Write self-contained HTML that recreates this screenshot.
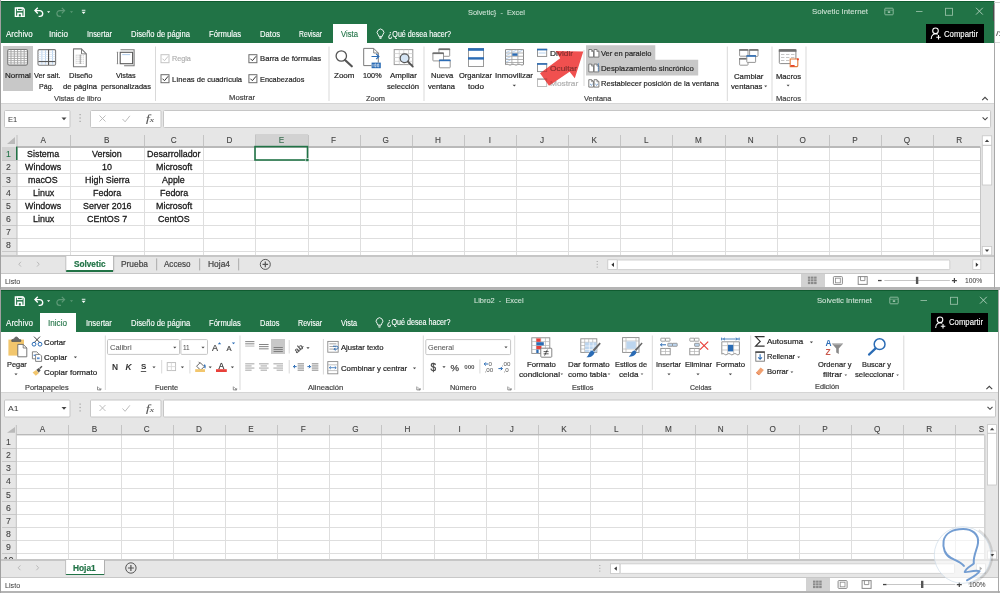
<!DOCTYPE html>
<html><head><meta charset="utf-8"><style>
html,body{margin:0;padding:0;width:1000px;height:593px;overflow:hidden;background:#fff;font-family:"Liberation Sans", sans-serif;}
#root{position:relative;width:1000px;height:593px;overflow:hidden;}
</style></head><body><div id="root">
<div style="position:absolute;left:0px;top:0px;width:1000px;height:593px;background:#ffffff;"></div><div style="position:absolute;left:1px;top:1px;width:993px;height:42px;background:#217346;"></div><div style="position:absolute;left:333px;top:24px;width:34px;height:19px;background:#ffffff;"></div><div style="position:absolute;left:926px;top:24px;width:58px;height:19px;background:#000000;"></div><div style="position:absolute;left:1px;top:43px;width:993px;height:60px;background:#ffffff;"></div><div style="position:absolute;left:1px;top:104px;width:993px;height:43px;background:#e6e6e6;"></div><div style="position:absolute;left:0px;top:287px;width:1000px;height:3px;background:#b4b4b4;"></div><div style="position:absolute;left:1px;top:290px;width:998px;height:42px;background:#217346;"></div><div style="position:absolute;left:39.6px;top:313px;width:36.6px;height:19px;background:#ffffff;"></div><div style="position:absolute;left:931px;top:313px;width:57px;height:19px;background:#000000;"></div><div style="position:absolute;left:1px;top:332px;width:998px;height:60px;background:#ffffff;"></div><div style="position:absolute;left:1px;top:393px;width:998px;height:43px;background:#e6e6e6;"></div><div style="position:absolute;left:255px;top:134px;width:53px;height:11.6px;background:#d2d2d2;"></div><div style="position:absolute;left:17px;top:146.6px;width:963px;height:108.4px;background:#ffffff;"></div><div style="position:absolute;left:1px;top:146.6px;width:16px;height:108.4px;background:#e6e6e6;"></div><div style="position:absolute;left:2px;top:147.2px;width:14.6px;height:12.9px;background:#d2d2d2;"></div><div style="position:absolute;left:1px;top:255px;width:993px;height:1.6px;background:#c6c6c6;"></div><div style="position:absolute;left:1px;top:256.5px;width:993px;height:16.3px;background:#e6e6e6;"></div><div style="position:absolute;left:1px;top:272.8px;width:993px;height:1.5px;background:#c8c8c8;"></div><div style="position:absolute;left:1px;top:274.3px;width:993px;height:12.7px;background:#ffffff;"></div><div style="position:absolute;left:65.8px;top:256px;width:47.4px;height:15px;background:#ffffff;"></div><div style="position:absolute;left:65.8px;top:270.2px;width:47.4px;height:1.6px;background:#217346;"></div><div style="position:absolute;left:16.3px;top:435.3px;width:968.1px;height:123.90000000000003px;background:#ffffff;"></div><div style="position:absolute;left:1px;top:435.3px;width:15.3px;height:123.90000000000003px;background:#e6e6e6;"></div><div style="position:absolute;left:1px;top:559.2px;width:997px;height:1.6px;background:#c6c6c6;"></div><div style="position:absolute;left:1px;top:560.8px;width:997px;height:16px;background:#e6e6e6;"></div><div style="position:absolute;left:1px;top:576.8px;width:997px;height:1.5px;background:#c8c8c8;"></div><div style="position:absolute;left:1px;top:578.3px;width:997px;height:12.7px;background:#ffffff;"></div><div style="position:absolute;left:1px;top:591px;width:999px;height:2px;background:#b4b4b4;"></div><div style="position:absolute;left:65.6px;top:560px;width:38.4px;height:15px;background:#ffffff;"></div><div style="position:absolute;left:65.6px;top:573.6px;width:38.4px;height:1.6px;background:#217346;"></div><div style="position:absolute;left:3.2px;top:45.5px;width:29.6px;height:45.4px;background:#c8c8c8;"></div><div style="position:absolute;left:980px;top:134px;width:14px;height:121px;background:#e6e6e6;"></div><div style="position:absolute;left:800.5px;top:273.6px;width:24.899999999999977px;height:13.6px;background:#d2d2d2;"></div><div style="position:absolute;left:271px;top:339.3px;width:14.3px;height:14.7px;background:#c8c8c8;"></div><div style="position:absolute;left:984.4px;top:424px;width:14px;height:135.2px;background:#e6e6e6;"></div><div style="position:absolute;left:805.6px;top:577.6px;width:24.0px;height:13.6px;background:#d2d2d2;"></div>
<svg width="1000" height="593" viewBox="0 0 1000 593" style="position:absolute;left:0;top:0">
<rect x="1" y="1" width="993" height="1" fill="#0f5c30"/><rect x="1" y="103" width="993" height="1" fill="#d5d5d5"/><rect x="0" y="0" width="1" height="289" fill="#a0a0a0"/><rect x="994" y="1" width="1" height="288" fill="#a8a8a8"/><rect x="994" y="2" width="6" height="1" fill="#d0d0d0"/><rect x="1" y="290" width="998" height="1" fill="#0f5c30"/><rect x="1" y="392" width="998" height="1" fill="#d5d5d5"/><rect x="0" y="290" width="1" height="303" fill="#a0a0a0"/><rect x="998" y="290" width="1" height="303" fill="#a8a8a8"/><rect x="17" y="160" width="963" height="1" fill="#dedede"/><rect x="2" y="160" width="15" height="1" fill="#c8c8c8"/><rect x="17" y="173" width="963" height="1" fill="#dedede"/><rect x="2" y="173" width="15" height="1" fill="#c8c8c8"/><rect x="17" y="186" width="963" height="1" fill="#dedede"/><rect x="2" y="186" width="15" height="1" fill="#c8c8c8"/><rect x="17" y="199" width="963" height="1" fill="#dedede"/><rect x="2" y="199" width="15" height="1" fill="#c8c8c8"/><rect x="17" y="212" width="963" height="1" fill="#dedede"/><rect x="2" y="212" width="15" height="1" fill="#c8c8c8"/><rect x="17" y="225" width="963" height="1" fill="#dedede"/><rect x="2" y="225" width="15" height="1" fill="#c8c8c8"/><rect x="17" y="238" width="963" height="1" fill="#dedede"/><rect x="2" y="238" width="15" height="1" fill="#c8c8c8"/><rect x="17" y="251" width="963" height="1" fill="#dedede"/><rect x="2" y="251" width="15" height="1" fill="#c8c8c8"/><rect x="70" y="146.6" width="1" height="108.4" fill="#dedede"/><rect x="70" y="135" width="1" height="11.599999999999994" fill="#c4c4c4"/><rect x="144" y="146.6" width="1" height="108.4" fill="#dedede"/><rect x="144" y="135" width="1" height="11.599999999999994" fill="#c4c4c4"/><rect x="203" y="146.6" width="1" height="108.4" fill="#dedede"/><rect x="203" y="135" width="1" height="11.599999999999994" fill="#c4c4c4"/><rect x="255" y="146.6" width="1" height="108.4" fill="#dedede"/><rect x="255" y="135" width="1" height="11.599999999999994" fill="#c4c4c4"/><rect x="308" y="146.6" width="1" height="108.4" fill="#dedede"/><rect x="308" y="135" width="1" height="11.599999999999994" fill="#c4c4c4"/><rect x="360" y="146.6" width="1" height="108.4" fill="#dedede"/><rect x="360" y="135" width="1" height="11.599999999999994" fill="#c4c4c4"/><rect x="412" y="146.6" width="1" height="108.4" fill="#dedede"/><rect x="412" y="135" width="1" height="11.599999999999994" fill="#c4c4c4"/><rect x="464" y="146.6" width="1" height="108.4" fill="#dedede"/><rect x="464" y="135" width="1" height="11.599999999999994" fill="#c4c4c4"/><rect x="516" y="146.6" width="1" height="108.4" fill="#dedede"/><rect x="516" y="135" width="1" height="11.599999999999994" fill="#c4c4c4"/><rect x="568" y="146.6" width="1" height="108.4" fill="#dedede"/><rect x="568" y="135" width="1" height="11.599999999999994" fill="#c4c4c4"/><rect x="620" y="146.6" width="1" height="108.4" fill="#dedede"/><rect x="620" y="135" width="1" height="11.599999999999994" fill="#c4c4c4"/><rect x="672" y="146.6" width="1" height="108.4" fill="#dedede"/><rect x="672" y="135" width="1" height="11.599999999999994" fill="#c4c4c4"/><rect x="725" y="146.6" width="1" height="108.4" fill="#dedede"/><rect x="725" y="135" width="1" height="11.599999999999994" fill="#c4c4c4"/><rect x="777" y="146.6" width="1" height="108.4" fill="#dedede"/><rect x="777" y="135" width="1" height="11.599999999999994" fill="#c4c4c4"/><rect x="829" y="146.6" width="1" height="108.4" fill="#dedede"/><rect x="829" y="135" width="1" height="11.599999999999994" fill="#c4c4c4"/><rect x="881" y="146.6" width="1" height="108.4" fill="#dedede"/><rect x="881" y="135" width="1" height="11.599999999999994" fill="#c4c4c4"/><rect x="933" y="146.6" width="1" height="108.4" fill="#dedede"/><rect x="933" y="135" width="1" height="11.599999999999994" fill="#c4c4c4"/><rect x="17" y="146" width="963" height="2" fill="#b9b9b9"/><rect x="16.5" y="135" width="1" height="120" fill="#c0c0c0"/><polygon points="7,144.1 15,144.1 15,137" fill="#b9b9b9"/><rect x="255" y="146.6" width="52.5" height="13.4" fill="none" stroke="#217346" stroke-width="1.6"/><rect x="305.8" y="158.3" width="3.2" height="3.2" fill="#217346" stroke="#fff" stroke-width="0.6"/><rect x="16" y="146.6" width="1.5" height="13.400000000000006" fill="#217346"/><rect x="65.3" y="256" width="1" height="15.5" fill="#c0c0c0"/><rect x="113.2" y="256" width="1" height="15.5" fill="#b0b0b0"/><rect x="156" y="258.4" width="1.2" height="12.0" fill="#b4b4b4"/><rect x="199" y="258.4" width="1.2" height="12.0" fill="#b4b4b4"/><rect x="238" y="258.4" width="1.2" height="12.0" fill="#b4b4b4"/><rect x="16.3" y="448" width="968.1" height="1" fill="#dedede"/><rect x="2" y="448" width="14.3" height="1" fill="#c8c8c8"/><rect x="16.3" y="461" width="968.1" height="1" fill="#dedede"/><rect x="2" y="461" width="14.3" height="1" fill="#c8c8c8"/><rect x="16.3" y="474" width="968.1" height="1" fill="#dedede"/><rect x="2" y="474" width="14.3" height="1" fill="#c8c8c8"/><rect x="16.3" y="488" width="968.1" height="1" fill="#dedede"/><rect x="2" y="488" width="14.3" height="1" fill="#c8c8c8"/><rect x="16.3" y="501" width="968.1" height="1" fill="#dedede"/><rect x="2" y="501" width="14.3" height="1" fill="#c8c8c8"/><rect x="16.3" y="514" width="968.1" height="1" fill="#dedede"/><rect x="2" y="514" width="14.3" height="1" fill="#c8c8c8"/><rect x="16.3" y="527" width="968.1" height="1" fill="#dedede"/><rect x="2" y="527" width="14.3" height="1" fill="#c8c8c8"/><rect x="16.3" y="540" width="968.1" height="1" fill="#dedede"/><rect x="2" y="540" width="14.3" height="1" fill="#c8c8c8"/><rect x="16.3" y="553" width="968.1" height="1" fill="#dedede"/><rect x="2" y="553" width="14.3" height="1" fill="#c8c8c8"/><rect x="68" y="435.3" width="1" height="123.90000000000003" fill="#dedede"/><rect x="68" y="425" width="1" height="10.300000000000011" fill="#c4c4c4"/><rect x="121" y="435.3" width="1" height="123.90000000000003" fill="#dedede"/><rect x="121" y="425" width="1" height="10.300000000000011" fill="#c4c4c4"/><rect x="173" y="435.3" width="1" height="123.90000000000003" fill="#dedede"/><rect x="173" y="425" width="1" height="10.300000000000011" fill="#c4c4c4"/><rect x="225" y="435.3" width="1" height="123.90000000000003" fill="#dedede"/><rect x="225" y="425" width="1" height="10.300000000000011" fill="#c4c4c4"/><rect x="277" y="435.3" width="1" height="123.90000000000003" fill="#dedede"/><rect x="277" y="425" width="1" height="10.300000000000011" fill="#c4c4c4"/><rect x="329" y="435.3" width="1" height="123.90000000000003" fill="#dedede"/><rect x="329" y="425" width="1" height="10.300000000000011" fill="#c4c4c4"/><rect x="381" y="435.3" width="1" height="123.90000000000003" fill="#dedede"/><rect x="381" y="425" width="1" height="10.300000000000011" fill="#c4c4c4"/><rect x="434" y="435.3" width="1" height="123.90000000000003" fill="#dedede"/><rect x="434" y="425" width="1" height="10.300000000000011" fill="#c4c4c4"/><rect x="486" y="435.3" width="1" height="123.90000000000003" fill="#dedede"/><rect x="486" y="425" width="1" height="10.300000000000011" fill="#c4c4c4"/><rect x="538" y="435.3" width="1" height="123.90000000000003" fill="#dedede"/><rect x="538" y="425" width="1" height="10.300000000000011" fill="#c4c4c4"/><rect x="590" y="435.3" width="1" height="123.90000000000003" fill="#dedede"/><rect x="590" y="425" width="1" height="10.300000000000011" fill="#c4c4c4"/><rect x="642" y="435.3" width="1" height="123.90000000000003" fill="#dedede"/><rect x="642" y="425" width="1" height="10.300000000000011" fill="#c4c4c4"/><rect x="695" y="435.3" width="1" height="123.90000000000003" fill="#dedede"/><rect x="695" y="425" width="1" height="10.300000000000011" fill="#c4c4c4"/><rect x="747" y="435.3" width="1" height="123.90000000000003" fill="#dedede"/><rect x="747" y="425" width="1" height="10.300000000000011" fill="#c4c4c4"/><rect x="799" y="435.3" width="1" height="123.90000000000003" fill="#dedede"/><rect x="799" y="425" width="1" height="10.300000000000011" fill="#c4c4c4"/><rect x="851" y="435.3" width="1" height="123.90000000000003" fill="#dedede"/><rect x="851" y="425" width="1" height="10.300000000000011" fill="#c4c4c4"/><rect x="903" y="435.3" width="1" height="123.90000000000003" fill="#dedede"/><rect x="903" y="425" width="1" height="10.300000000000011" fill="#c4c4c4"/><rect x="955" y="435.3" width="1" height="123.90000000000003" fill="#dedede"/><rect x="955" y="425" width="1" height="10.300000000000011" fill="#c4c4c4"/><rect x="16.3" y="434" width="968.1" height="1.4" fill="#b9b9b9"/><rect x="15.8" y="425" width="1" height="134.20000000000005" fill="#c0c0c0"/><polygon points="7,432.8 15,432.8 15,427" fill="#b9b9b9"/><rect x="65.1" y="560" width="1" height="15" fill="#c0c0c0"/><rect x="104" y="560" width="1" height="15" fill="#b0b0b0"/><rect x="4.5" y="110.5" width="65.5" height="17" fill="#fff" stroke="#c6c6c6" stroke-width="1" rx="1"/><path d="M61.5 117.5 h5 l-2.5 2.8z" fill="#444"/><rect x="79.5" y="114.0" width="1.2" height="1.2" fill="#a0a0a0" /><rect x="79.5" y="117.4" width="1.2" height="1.2" fill="#a0a0a0" /><rect x="79.5" y="120.8" width="1.2" height="1.2" fill="#a0a0a0" /><rect x="90.5" y="110.5" width="70.5" height="17" fill="#fff" stroke="#c6c6c6" stroke-width="1" rx="1"/><path d="M99.5 115.5 l6 6 M105.5 115.5 l-6 6" stroke="#b4b4b4" stroke-width="0.9" fill="none"/><path d="M122.5 119 l2.6 2.8 l4.8 -6" stroke="#b4b4b4" stroke-width="0.9" fill="none"/><rect x="163.5" y="110.5" width="827.1" height="17" fill="#fff" stroke="#c6c6c6" stroke-width="1" rx="1"/><path d="M982.6 117.3 l2.5 2.5 l2.5 -2.5" stroke="#444" stroke-width="1.1" fill="none"/><rect x="4.5" y="400.0" width="65.5" height="17" fill="#fff" stroke="#c6c6c6" stroke-width="1" rx="1"/><path d="M61.5 407.0 h5 l-2.5 2.8z" fill="#444"/><rect x="79.5" y="403.5" width="1.2" height="1.2" fill="#a0a0a0" /><rect x="79.5" y="406.9" width="1.2" height="1.2" fill="#a0a0a0" /><rect x="79.5" y="410.3" width="1.2" height="1.2" fill="#a0a0a0" /><rect x="90.5" y="400.0" width="70.5" height="17" fill="#fff" stroke="#c6c6c6" stroke-width="1" rx="1"/><path d="M99.5 405.0 l6 6 M105.5 405.0 l-6 6" stroke="#b4b4b4" stroke-width="0.9" fill="none"/><path d="M122.5 408.5 l2.6 2.8 l4.8 -6" stroke="#b4b4b4" stroke-width="0.9" fill="none"/><rect x="163.5" y="400.0" width="832.0" height="17" fill="#fff" stroke="#c6c6c6" stroke-width="1" rx="1"/><path d="M987.5 406.8 l2.5 2.5 l2.5 -2.5" stroke="#444" stroke-width="1.1" fill="none"/><g transform="translate(0,0)"><path d="M15.4 8 h7.6 l1.2 1.2 v7.2 h-8.8z" fill="none" stroke="#ffffff" stroke-width="1.4"/><rect x="17.4" y="8" width="4.8" height="2.6" fill="none" stroke="#ffffff" stroke-width="1"/><rect x="17.2" y="12.6" width="5.2" height="3.8" fill="#ffffff"/><rect x="18.8" y="14.2" width="2" height="2.2" fill="#217346"/></g><g transform="translate(0,0)"><path d="M35.2 10.6 h4.6 a2.9 2.9 0 0 1 0 5.8 h-1.2" fill="none" stroke="#ffffff" stroke-width="1.4"/><path d="M37.8 7.8 l-2.8 2.8 l2.8 2.8" fill="none" stroke="#ffffff" stroke-width="1.4"/><path d="M47 11.2 h3.2 l-1.6 1.8z" fill="#ffffff"/><path d="M64.4 10.6 h-4.6 a2.9 2.9 0 0 0 0 5.8 h1.2" fill="none" stroke="#5e9a77" stroke-width="1.2"/><path d="M61.8 7.8 l2.8 2.8 l-2.8 2.8" fill="none" stroke="#5e9a77" stroke-width="1.2"/><path d="M70 11.2 h3 l-1.5 1.7z" fill="#5e9a77"/><rect x="81.8" y="9.8" width="3.6" height="0.9" fill="#ffffff"/><path d="M81.6 11.8 h4 l-2 2.2z" fill="#ffffff"/></g><g transform="translate(0,289)"><path d="M15.4 8 h7.6 l1.2 1.2 v7.2 h-8.8z" fill="none" stroke="#ffffff" stroke-width="1.4"/><rect x="17.4" y="8" width="4.8" height="2.6" fill="none" stroke="#ffffff" stroke-width="1"/><rect x="17.2" y="12.6" width="5.2" height="3.8" fill="#ffffff"/><rect x="18.8" y="14.2" width="2" height="2.2" fill="#217346"/></g><g transform="translate(0,289)"><path d="M35.2 10.6 h4.6 a2.9 2.9 0 0 1 0 5.8 h-1.2" fill="none" stroke="#ffffff" stroke-width="1.4"/><path d="M37.8 7.8 l-2.8 2.8 l2.8 2.8" fill="none" stroke="#ffffff" stroke-width="1.4"/><path d="M47 11.2 h3.2 l-1.6 1.8z" fill="#ffffff"/><path d="M64.4 10.6 h-4.6 a2.9 2.9 0 0 0 0 5.8 h1.2" fill="none" stroke="#5e9a77" stroke-width="1.2"/><path d="M61.8 7.8 l2.8 2.8 l-2.8 2.8" fill="none" stroke="#5e9a77" stroke-width="1.2"/><path d="M70 11.2 h3 l-1.5 1.7z" fill="#5e9a77"/><rect x="81.8" y="9.8" width="3.6" height="0.9" fill="#ffffff"/><path d="M81.6 11.8 h4 l-2 2.2z" fill="#ffffff"/></g><g transform="translate(0,0)"><rect x="884.8" y="8.2" width="8.4" height="6.6" rx="0.8" fill="none" stroke="#93bea4" stroke-width="0.9"/><path d="M884.8 10.2 h8.4" stroke="#93bea4" stroke-width="0.6"/><rect x="887.8" y="11.2" width="2.4" height="1.8" fill="#93bea4"/><rect x="916" y="11" width="6.5" height="0.9" fill="#93bea4"/><rect x="945.5" y="8.3" width="7" height="7" fill="none" stroke="#93bea4" stroke-width="0.9"/><path d="M976 7.8 l6.8 6.8 M982.8 7.8 l-6.8 6.8" stroke="#b4d3c0" stroke-width="0.9"/></g><g transform="translate(0,289)"><rect x="889.8" y="8.2" width="8.4" height="6.6" rx="0.8" fill="none" stroke="#93bea4" stroke-width="0.9"/><path d="M889.8 10.2 h8.4" stroke="#93bea4" stroke-width="0.6"/><rect x="892.8" y="11.2" width="2.4" height="1.8" fill="#93bea4"/><rect x="920.5" y="11" width="6.5" height="0.9" fill="#93bea4"/><rect x="950.5" y="8.3" width="7" height="7" fill="none" stroke="#93bea4" stroke-width="0.9"/><path d="M980 7.8 l6.8 6.8 M986.8 7.8 l-6.8 6.8" stroke="#b4d3c0" stroke-width="0.9"/></g><path d="M378.2 34.8 a3.3 3.3 0 1 1 4.6 0 l-0.6 1.6 h-3.4z" fill="none" stroke="#ffffff" stroke-width="0.9"/><path d="M379.2 37.4 h2.6 M379.5 38.5 h2" stroke="#ffffff" stroke-width="0.8"/><path d="M377.2 323.5 a3.3 3.3 0 1 1 4.6 0 l-0.6 1.6 h-3.4z" fill="none" stroke="#ffffff" stroke-width="0.9"/><path d="M378.2 326.1 h2.6 M378.5 327.2 h2" stroke="#ffffff" stroke-width="0.8"/><circle cx="935.5" cy="30.8" r="2.8" fill="none" stroke="#ffffff" stroke-width="1.1"/><path d="M931.2 39.0 a4.6 4.6 0 0 1 6.6 -4.8" fill="none" stroke="#ffffff" stroke-width="1.1"/><path d="M938.5 35.0 v4.5 M936.3 37.3 h4.5" stroke="#ffffff" stroke-width="1.1"/><circle cx="940.0" cy="319.8" r="2.8" fill="none" stroke="#ffffff" stroke-width="1.1"/><path d="M935.7 328.0 a4.6 4.6 0 0 1 6.6 -4.8" fill="none" stroke="#ffffff" stroke-width="1.1"/><path d="M943.0 324.0 v4.5 M940.8 326.3 h4.5" stroke="#ffffff" stroke-width="1.1"/><rect x="7.7" y="49.5" width="19.8" height="15.6" rx="1.5" fill="#fff" stroke="#7a7a7a" stroke-width="1.1"/><rect x="10.50" y="50" width="1" height="14.6" fill="#a8a8a8"/><rect x="13.80" y="50" width="1" height="14.6" fill="#a8a8a8"/><rect x="17.10" y="50" width="1" height="14.6" fill="#a8a8a8"/><rect x="20.40" y="50" width="1" height="14.6" fill="#a8a8a8"/><rect x="23.70" y="50" width="1" height="14.6" fill="#a8a8a8"/><rect x="8.2" y="51.28" width="18.8" height="0.9" fill="#a8a8a8"/><rect x="8.2" y="53.51" width="18.8" height="0.9" fill="#a8a8a8"/><rect x="8.2" y="55.74" width="18.8" height="0.9" fill="#a8a8a8"/><rect x="8.2" y="57.97" width="18.8" height="0.9" fill="#a8a8a8"/><rect x="8.2" y="60.20" width="18.8" height="0.9" fill="#a8a8a8"/><rect x="8.2" y="62.43" width="18.8" height="0.9" fill="#a8a8a8"/><rect x="38" y="49.6" width="17.6" height="15.6" rx="1.2" fill="#fff" stroke="#7a7a7a" stroke-width="1.1"/><rect x="41.5" y="50.2" width="0.8" height="14.5" fill="#a9c8ea"/><rect x="45" y="50.2" width="0.8" height="14.5" fill="#a9c8ea"/><rect x="52" y="50.2" width="0.8" height="14.5" fill="#a9c8ea"/><rect x="38.5" y="51.80" width="16.6" height="0.7" fill="#d6e4f3"/><rect x="38.5" y="54.00" width="16.6" height="0.7" fill="#d6e4f3"/><rect x="38.5" y="56.20" width="16.6" height="0.7" fill="#d6e4f3"/><rect x="38.5" y="58.40" width="16.6" height="0.7" fill="#d6e4f3"/><rect x="38.5" y="60.60" width="16.6" height="0.7" fill="#d6e4f3"/><rect x="38.5" y="62.80" width="16.6" height="0.7" fill="#d6e4f3"/><rect x="48" y="49.8" width="1.1" height="15.2" fill="#5a5a5a"/><rect x="38.4" y="61" width="16.8" height="1.1" fill="#5a5a5a"/><path d="M73.5 48.9 h8 l4.8 5 v12.8 h-12.8z" fill="#fff" stroke="#7a7a7a" stroke-width="1.1" stroke-linejoin="round"/><path d="M81.5 48.9 v5 h4.8" fill="none" stroke="#7a7a7a" stroke-width="1"/><rect x="75.6" y="54.6" width="8.4" height="9.4" fill="#dcdcdc"/><rect x="75.6" y="56.50" width="8.4" height="0.7" fill="#fff"/><rect x="75.6" y="58.40" width="8.4" height="0.7" fill="#fff"/><rect x="75.6" y="60.30" width="8.4" height="0.7" fill="#fff"/><rect x="75.6" y="62.20" width="8.4" height="0.7" fill="#fff"/><rect x="77.7" y="54.6" width="0.6" height="9.4" fill="#fff"/><rect x="82" y="54.6" width="0.6" height="9.4" fill="#fff"/><rect x="79.8" y="54.6" width="0.9" height="9.4" fill="#9a9a9a"/><rect x="120.2" y="52.3" width="12.4" height="11.4" fill="#fff" stroke="#5a5a5a" stroke-width="1.1"/><rect x="122.2" y="54.2" width="8" height="0.9" fill="#a9c8ea"/><path d="M120.5 49.8 h13.6 v16 h-10" fill="none" stroke="#7a7a7a" stroke-width="1.1"/><path d="M117.5 52.3 v11.4 M116.8 52.3 h1.4 M116.8 63.7 h1.4" fill="none" stroke="#7a7a7a" stroke-width="0.9"/><rect x="155" y="46.5" width="1" height="54.5" fill="#d9d9d9"/><rect x="328.5" y="46.5" width="1" height="54.5" fill="#d9d9d9"/><rect x="423.5" y="46.5" width="1" height="54.5" fill="#d9d9d9"/><rect x="583.5" y="50" width="1" height="36" fill="#d9d9d9"/><rect x="726.8" y="46.5" width="1" height="54.5" fill="#d9d9d9"/><rect x="771.5" y="46.5" width="1" height="54.5" fill="#d9d9d9"/><rect x="805.5" y="46.5" width="1" height="54.5" fill="#d9d9d9"/><rect x="161.0" y="54.7" width="8" height="8" fill="#fff" stroke="#c4c4c4" stroke-width="1"/><path d="M162.5 58.7 l2 2 l3.6 -4.4" fill="none" stroke="#c4c4c4" stroke-width="1"/><rect x="161.0" y="74.7" width="8" height="8" fill="#fff" stroke="#6a6a6a" stroke-width="1"/><path d="M162.5 78.7 l2 2 l3.6 -4.4" fill="none" stroke="#333" stroke-width="1"/><rect x="248.9" y="54.7" width="8" height="8" fill="#fff" stroke="#6a6a6a" stroke-width="1"/><path d="M250.4 58.7 l2 2 l3.6 -4.4" fill="none" stroke="#333" stroke-width="1"/><rect x="248.9" y="74.7" width="8" height="8" fill="#fff" stroke="#6a6a6a" stroke-width="1"/><path d="M250.4 78.7 l2 2 l3.6 -4.4" fill="none" stroke="#333" stroke-width="1"/><circle cx="341.3" cy="56" r="5.2" fill="none" stroke="#555" stroke-width="1.3"/><path d="M345 60 l6.8 6.3" stroke="#555" stroke-width="2.2" stroke-linecap="round"/><path d="M363.7 48.4 h10 l4.6 4.6 v9.6 M371.5 65.6 h-7.8 v-17.2" fill="#fff" stroke="#7a7a7a" stroke-width="1"/><path d="M373.7 48.4 v4.6 h4.6" fill="none" stroke="#7a7a7a" stroke-width="0.9"/><path d="M371.5 56.5 h7.2 M376.2 53.8 l2.7 2.7 l-2.7 2.7" fill="none" stroke="#2b6cb5" stroke-width="1.2"/><rect x="371.6" y="62.6" width="9.2" height="5.6" fill="#2b6cb5"/><path d="M373 64 v2.8 M374.8 64 h1.2 v2.8 h-1.2z M377.6 64 h1.2 v2.8 h-1.2z" fill="none" stroke="#fff" stroke-width="0.6"/><rect x="394.2" y="49.6" width="18.6" height="15" fill="#fff" stroke="#9a9a9a" stroke-width="1"/><rect x="398.85" y="49.6" width="0.7" height="15" fill="#c8c8c8"/><rect x="403.50" y="49.6" width="0.7" height="15" fill="#c8c8c8"/><rect x="408.15" y="49.6" width="0.7" height="15" fill="#c8c8c8"/><rect x="394.2" y="53.35" width="18.6" height="0.7" fill="#c8c8c8"/><rect x="394.2" y="57.10" width="18.6" height="0.7" fill="#c8c8c8"/><rect x="394.2" y="60.85" width="18.6" height="0.7" fill="#c8c8c8"/><circle cx="404.6" cy="58.2" r="4.4" fill="#d5e5f5" stroke="#555" stroke-width="1.2"/><path d="M407.8 61.5 l5 5" stroke="#555" stroke-width="1.8" stroke-linecap="round"/><rect x="438.9" y="48.9" width="10.8" height="7.4" fill="#fff" stroke="#8a8a8a" stroke-width="0.9" rx="0.6"/><rect x="438.5" y="48.5" width="11.600000000000001" height="1.6" fill="#707070"/><rect x="432.9" y="52.9" width="10.6" height="8" fill="#fff" stroke="#8a8a8a" stroke-width="0.9" rx="0.6"/><rect x="432.5" y="52.5" width="11.4" height="1.6" fill="#707070"/><rect x="439.4" y="60" width="10.8" height="7.8" fill="#fff" stroke="#8a8a8a" stroke-width="0.9" rx="0.6"/><rect x="439.0" y="59.6" width="11.600000000000001" height="1.6" fill="#2b6cb5"/><rect x="468.5" y="48.5" width="15" height="18" fill="#fff" stroke="#9a9a9a" stroke-width="1"/><rect x="468" y="48.2" width="16" height="2.6" fill="#2b6cb5"/><rect x="468" y="57.2" width="16" height="2.4" fill="#2b6cb5"/><path d="M505.5 49.6 h18 v15 q-1.5 1 -3 0 q-1.5 -1 -3 0 q-1.5 1 -3 0 q-1.5 -1 -3 0 q-1.5 1 -3 0 q-1.5 -1 -3 0 z" fill="#fff" stroke="#8a8a8a" stroke-width="1"/><rect x="511.5" y="49.6" width="0.8" height="15" fill="#a0a0a0"/><rect x="517.5" y="49.6" width="0.8" height="15" fill="#a0a0a0"/><rect x="505.5" y="52.6" width="18" height="0.8" fill="#a0a0a0"/><rect x="505.5" y="55.8" width="18" height="0.8" fill="#a0a0a0"/><rect x="505.5" y="59" width="18" height="0.8" fill="#a0a0a0"/><rect x="505.5" y="62" width="18" height="0.8" fill="#a0a0a0"/><rect x="512.3" y="53.4" width="5.2" height="2.4" fill="#2b6cb5"/><path d="M506 52.5 l4.5 -2" stroke="#a9c8ea" stroke-width="0.8"/><path d="M506 55.5 l4.5 -2" stroke="#a9c8ea" stroke-width="0.8"/><path d="M506 58.8 l4.5 -2" stroke="#a9c8ea" stroke-width="0.8"/><path d="M506 62 l4.5 -2" stroke="#a9c8ea" stroke-width="0.8"/><path d="M512 52.4 l4.5 -2.2" stroke="#a9c8ea" stroke-width="0.8"/><path d="M518 52.4 l4.5 -2.2" stroke="#a9c8ea" stroke-width="0.8"/><path d="M512.6 84.8 h3.4 l-1.7 1.8z" fill="#444"/><rect x="537.5" y="49.2" width="9.2" height="7.2" fill="#fff" stroke="#8a8a8a" stroke-width="0.9"/><rect x="537" y="48.8" width="10.2" height="1.6" fill="#2b6cb5"/><rect x="538.5" y="52.6" width="7.2" height="0.8" fill="#a9c8ea"/><rect x="537.5" y="63.6" width="9.2" height="8" fill="#fff" stroke="#8a8a8a" stroke-width="0.9"/><rect x="537" y="63.2" width="10.2" height="1.6" fill="#2b6cb5"/><rect x="537.5" y="78.9" width="9.2" height="7.6" fill="#fff" stroke="#b8b8b8" stroke-width="0.9"/><rect x="537" y="78.5" width="10.2" height="1.5" fill="#b0b0b0"/><path d="M586 45.2 h69.3 v14.6 h42.9 v15.6 h-112.2z" fill="#c8c8c8"/><path d="M588.8 49.5 h2.8 l2 2 v5.6 h-4.8z" fill="#fff" stroke="#6f6f6f" stroke-width="0.9" stroke-linejoin="round"/><path d="M591.5999999999999 49.5 v2 h2" fill="none" stroke="#6f6f6f" stroke-width="0.7"/><path d="M594.0999999999999 49.5 h2.8 l2 2 v5.6 h-4.8z" fill="#fff" stroke="#6f6f6f" stroke-width="0.9" stroke-linejoin="round"/><path d="M596.9 49.5 v2 h2" fill="none" stroke="#6f6f6f" stroke-width="0.7"/><path d="M588.8 64.1 h2.8 l2 2 v5.8 h-4.8z" fill="#fff" stroke="#6f6f6f" stroke-width="0.9" stroke-linejoin="round"/><path d="M591.5999999999999 64.1 v2 h2" fill="none" stroke="#6f6f6f" stroke-width="0.7"/><path d="M594.0999999999999 64.1 h2.8 l2 2 v5.8 h-4.8z" fill="#fff" stroke="#6f6f6f" stroke-width="0.9" stroke-linejoin="round"/><path d="M596.9 64.1 v2 h2" fill="none" stroke="#6f6f6f" stroke-width="0.7"/><path d="M598.3 63.5 v8.2" stroke="#2b6cb5" stroke-width="1" stroke-dasharray="1.2,0.8"/><path d="M588.8 79.7 h2.8 l2 2 v5.4 h-4.8z" fill="#fff" stroke="#6f6f6f" stroke-width="0.9" stroke-linejoin="round"/><path d="M591.5999999999999 79.7 v2 h2" fill="none" stroke="#6f6f6f" stroke-width="0.7"/><path d="M594.0999999999999 79.7 h2.8 l2 2 v5.4 h-4.8z" fill="#fff" stroke="#6f6f6f" stroke-width="0.9" stroke-linejoin="round"/><path d="M596.9 79.7 v2 h2" fill="none" stroke="#6f6f6f" stroke-width="0.7"/><path d="M590.2 84 l1.2 1.2 l1.2 -1.2 M595.4 84 l1.2 1.2 l1.2 -1.2" stroke="#2b6cb5" stroke-width="0.8" fill="none"/><rect x="739.6" y="49.6" width="8.4" height="6.6" fill="#fff" stroke="#8a8a8a" stroke-width="0.9" rx="0.6"/><rect x="739.2" y="49.2" width="9.200000000000001" height="1.6" fill="#707070"/><rect x="749.6" y="49.6" width="8.4" height="6.8" fill="#fff" stroke="#8a8a8a" stroke-width="0.9" rx="0.6"/><rect x="749.2" y="49.2" width="9.200000000000001" height="1.6" fill="#707070"/><rect x="739.6" y="58.4" width="8.4" height="6.8" fill="#fff" stroke="#8a8a8a" stroke-width="0.9" rx="0.6"/><rect x="739.2" y="58.0" width="9.200000000000001" height="1.6" fill="#707070"/><rect x="746.8" y="55.6" width="8.8" height="6.8" fill="#fff" stroke="#8a8a8a" stroke-width="0.9" rx="0.6"/><rect x="746.4" y="55.2" width="9.600000000000001" height="1.6" fill="#2b6cb5"/><path d="M764.2 85.6 h3 l-1.5 1.6z" fill="#444"/><rect x="779.3" y="49.6" width="16.6" height="14" rx="1" fill="#fff" stroke="#8a8a8a" stroke-width="1"/><rect x="778.8" y="49.2" width="17.6" height="2.6" fill="#707070"/><rect x="781" y="54" width="3.4" height="0.8" fill="#b8b8b8"/><rect x="786" y="54" width="3.4" height="0.8" fill="#b8b8b8"/><rect x="791" y="54" width="3.4" height="0.8" fill="#b8b8b8"/><rect x="781" y="57" width="3.4" height="0.8" fill="#b8b8b8"/><rect x="786" y="57" width="3.4" height="0.8" fill="#b8b8b8"/><rect x="791" y="57" width="3.4" height="0.8" fill="#b8b8b8"/><rect x="781" y="60" width="3.4" height="0.8" fill="#b8b8b8"/><rect x="786" y="60" width="3.4" height="0.8" fill="#b8b8b8"/><rect x="791" y="60" width="3.4" height="0.8" fill="#b8b8b8"/><path d="M790.2 59 h7.6 v6.4 a1.2 1.2 0 0 1 -1.2 1.2 h-6.4 z" fill="#fff" stroke="#e07b39" stroke-width="1.1"/><rect x="797" y="58.4" width="1.8" height="1.8" fill="#e8432c"/><rect x="790.6" y="65" width="4" height="1.6" fill="#e8432c"/><path d="M786.6 84.8 h3 l-1.5 1.6z" fill="#444"/><path d="M982.2 100.2 l2.8 -2.8 l2.8 2.8" fill="none" stroke="#444" stroke-width="1.1"/><rect x="980" y="146.6" width="1" height="108.4" fill="#c6c6c6"/><rect x="982.3" y="135.8" width="9.4" height="9.4" fill="#fff" stroke="#c6c6c6" stroke-width="0.8"/><path d="M984.8 142 h4.4 l-2.2 -2.4z" fill="#444"/><rect x="982.3" y="145.6" width="9.4" height="39.4" fill="#fff" stroke="#c6c6c6" stroke-width="0.8"/><rect x="982.3" y="246.4" width="9.4" height="8.6" fill="#fff" stroke="#c6c6c6" stroke-width="0.8"/><path d="M984.8 249.6 h4.4 l-2.2 2.4z" fill="#444"/><rect x="596.7" y="261" width="1" height="1" fill="#a0a0a0"/><rect x="596.7" y="263.8" width="1" height="1" fill="#a0a0a0"/><rect x="596.7" y="266.6" width="1" height="1" fill="#a0a0a0"/><rect x="607.8" y="259.8" width="9.4" height="9.8" fill="#fff" stroke="#c6c6c6" stroke-width="0.8"/><path d="M614 262.6 v4.4 l-2.6 -2.2z" fill="#333"/><rect x="617.4" y="260" width="332.4" height="9.6" rx="1" fill="#fff" stroke="#c6c6c6" stroke-width="0.8"/><rect x="972.8" y="259.8" width="8" height="9.8" fill="#fff" stroke="#c6c6c6" stroke-width="0.8"/><path d="M975.8 262.6 v4.4 l2.6 -2.2z" fill="#333"/><path d="M21 261.8 l-2.2 2.4 l2.2 2.4" fill="none" stroke="#b4b4b4" stroke-width="0.9"/><path d="M37 261.8 l2.2 2.4 l-2.2 2.4" fill="none" stroke="#b4b4b4" stroke-width="0.9"/><circle cx="265.3" cy="264.4" r="5" fill="none" stroke="#555" stroke-width="1"/><path d="M265.3 261.6 v5.6 M262.5 264.4 h5.6" stroke="#555" stroke-width="1.2"/><rect x="807.9" y="276.40000000000003" width="9" height="8" fill="none" stroke="#888" stroke-width="0.0"/><rect x="807.90" y="276.60" width="2.5" height="2.1" fill="#8a8a8a"/><rect x="807.90" y="279.30" width="2.5" height="2.1" fill="#8a8a8a"/><rect x="807.90" y="282.00" width="2.5" height="2.1" fill="#8a8a8a"/><rect x="811.00" y="276.60" width="2.5" height="2.1" fill="#8a8a8a"/><rect x="811.00" y="279.30" width="2.5" height="2.1" fill="#8a8a8a"/><rect x="811.00" y="282.00" width="2.5" height="2.1" fill="#8a8a8a"/><rect x="814.10" y="276.60" width="2.5" height="2.1" fill="#8a8a8a"/><rect x="814.10" y="279.30" width="2.5" height="2.1" fill="#8a8a8a"/><rect x="814.10" y="282.00" width="2.5" height="2.1" fill="#8a8a8a"/><rect x="833.4" y="276.6" width="9" height="7.8" rx="0.8" fill="none" stroke="#8a8a8a" stroke-width="1"/><rect x="835.5" y="278.20000000000005" width="4.8" height="4.6" fill="none" stroke="#8a8a8a" stroke-width="0.8"/><rect x="858.2" y="276.6" width="9" height="7.8" fill="none" stroke="#8a8a8a" stroke-width="1"/><path d="M860.5 276.6 v4 h4.4 v-4" fill="none" stroke="#8a8a8a" stroke-width="0.9"/><rect x="878" y="279.90000000000003" width="3.6" height="1.3" fill="#444"/><rect x="884.4" y="280.1" width="65.5" height="0.8" fill="#b8b8b8"/><rect x="915.9" y="276.8" width="2.4" height="7.2" fill="#555"/><path d="M951.9 280.6 h5 M954.4 278.1 v5" stroke="#444" stroke-width="1.2"/><rect x="104.8" y="335.5" width="1" height="54.5" fill="#d9d9d9"/><rect x="239.5" y="335.5" width="1" height="54.5" fill="#d9d9d9"/><rect x="422.8" y="335.5" width="1" height="54.5" fill="#d9d9d9"/><rect x="514.2" y="335.5" width="1" height="54.5" fill="#d9d9d9"/><rect x="651.8" y="335.5" width="1" height="54.5" fill="#d9d9d9"/><rect x="750.2" y="335.5" width="1" height="54.5" fill="#d9d9d9"/><rect x="903.3" y="335.5" width="1" height="54.5" fill="#d9d9d9"/><rect x="161.2" y="360" width="1" height="13.5" fill="#d9d9d9"/><rect x="189.4" y="360" width="1" height="13.5" fill="#d9d9d9"/><rect x="288.7" y="340" width="1" height="13.5" fill="#d9d9d9"/><rect x="288.7" y="360" width="1" height="13.5" fill="#d9d9d9"/><rect x="322.9" y="339" width="1" height="35.5" fill="#d9d9d9"/><rect x="479.4" y="359.5" width="1" height="14.0" fill="#d9d9d9"/><path d="M8.4 339.6 h15.6 v16 h-15.6z" fill="#f2c66d"/><path d="M11.8 341.4 h9 v-1.6 q-1.6 0 -2.4 -1.2 q-0.8 -1.6 -2.1 -1.6 q-1.3 0 -2.1 1.6 q-0.8 1.2 -2.4 1.2z" fill="#6a6a6a" stroke="#555" stroke-width="0.8"/><path d="M17.8 344.4 h5.4 l3.6 3.6 v8.8 h-9z" fill="#fff" stroke="#6a6a6a" stroke-width="0.9" stroke-linejoin="round"/><path d="M23.2 344.4 v3.6 h3.6" fill="none" stroke="#6a6a6a" stroke-width="0.8"/><path d="M14.4 373.4 h3.2 l-1.6 1.7600000000000002z" fill="#444"/><path d="M34 336.6 l6.2 6.4 M40 336.6 l-6.2 6.4" stroke="#444" stroke-width="1"/><circle cx="34" cy="344.2" r="1.9" fill="none" stroke="#2b6cb5" stroke-width="1"/><circle cx="40" cy="344.2" r="1.9" fill="none" stroke="#2b6cb5" stroke-width="1"/><path d="M32.4 351.8 h4.4 l1.6 1.6 v5.4 h-6z" fill="#fff" stroke="#777" stroke-width="0.9"/><path d="M35.6 354.4 h4.4 l1.6 1.6 v5.4 h-6z" fill="#fff" stroke="#777" stroke-width="0.9"/><rect x="33.6" y="354.6" width="2" height="1.4" fill="#5a8fd0"/><rect x="37" y="357.4" width="2.6" height="1.8" fill="#5a8fd0"/><path d="M73.80000000000001 356.4 h3.2 l-1.6 1.7600000000000002z" fill="#444"/><path d="M32.6 372.4 l3.6 -2.4 l2.6 3.2 l-3 2.6z" fill="#f2c66d"/><path d="M36.4 369.8 l2.4 -1.8 l1.8 2.2 l-1.8 2.6z" fill="#555"/><path d="M39.6 368.4 l2.4 -2.2" stroke="#555" stroke-width="1.4"/><path d="M97.5 386.5 v3.4 h3.4" fill="none" stroke="#777" stroke-width="0.8"/><path d="M98.5 387.3 l2.4 2.4 M100.9 388.1 v1.6 h-1.6" fill="none" stroke="#777" stroke-width="0.7"/><path d="M233.3 386.5 v3.4 h3.4" fill="none" stroke="#777" stroke-width="0.8"/><path d="M234.3 387.3 l2.4 2.4 M236.70000000000002 388.1 v1.6 h-1.6" fill="none" stroke="#777" stroke-width="0.7"/><path d="M416.8 386.5 v3.4 h3.4" fill="none" stroke="#777" stroke-width="0.8"/><path d="M417.8 387.3 l2.4 2.4 M420.2 388.1 v1.6 h-1.6" fill="none" stroke="#777" stroke-width="0.7"/><path d="M507.8 386.5 v3.4 h3.4" fill="none" stroke="#777" stroke-width="0.8"/><path d="M508.8 387.3 l2.4 2.4 M511.2 388.1 v1.6 h-1.6" fill="none" stroke="#777" stroke-width="0.7"/><rect x="107.5" y="339.6" width="72" height="14.8" rx="1" fill="#fff" stroke="#c6c6c6" stroke-width="1"/><rect x="180.9" y="339.6" width="26.6" height="14.8" rx="1" fill="#fff" stroke="#c6c6c6" stroke-width="1"/><path d="M173.20000000000002 346.8 h3.2 l-1.6 1.7600000000000002z" fill="#444"/><path d="M201.4 346.8 h3.2 l-1.6 1.7600000000000002z" fill="#444"/><text x="212" y="351" font-family="Liberation Sans" font-size="9" fill="#444" stroke="#444" stroke-width="0.2">A</text><path d="M217.8 344.2 h3.4 l-1.7 -1.9z" fill="#2b6cb5"/><text x="226.6" y="351" font-family="Liberation Sans" font-size="7.6" fill="#444" stroke="#444" stroke-width="0.2">A</text><path d="M231.8 342.4 h3.4 l-1.7 1.9z" fill="#2b6cb5"/><text x="112" y="370.2" font-family="Liberation Sans" font-size="8.4" font-weight="bold" fill="#333">N</text><text x="125.6" y="370.2" font-family="Liberation Sans" font-size="8.4" font-weight="bold" font-style="italic" fill="#333">K</text><text x="141" y="369.4" font-family="Liberation Sans" font-size="8" font-weight="bold" fill="#333">S</text><rect x="140.8" y="371" width="5.4" height="0.8" fill="#333"/><path d="M152.4 366.4 h3.2 l-1.6 1.7600000000000002z" fill="#444"/><rect x="167.2" y="362.6" width="8.4" height="8" fill="none" stroke="#bcbcbc" stroke-width="0.9"/><path d="M171.4 362.6 v8 M167.2 366.6 h8.4" stroke="#d4d4d4" stroke-width="0.8"/><path d="M180.8 366.4 h3.2 l-1.6 1.7600000000000002z" fill="#444"/><path d="M196.6 366.2 l3.6 -3.6 l4 4 l-3.6 3.6z" fill="#fff" stroke="#555" stroke-width="0.9"/><path d="M198.6 361.8 l1.6 1.6" stroke="#555" stroke-width="0.8"/><path d="M204.4 364.6 q1.4 1.8 0.4 3.6" stroke="#2b6cb5" stroke-width="1.4" fill="none"/><rect x="195.2" y="369.2" width="9.8" height="2.8" fill="#f2c66d"/><path d="M208.6 366.4 h3.2 l-1.6 1.7600000000000002z" fill="#444"/><text x="218.6" y="368.6" font-family="Liberation Sans" font-size="8.6" fill="#333" stroke="#333" stroke-width="0.25">A</text><rect x="216" y="369.2" width="10.8" height="2.8" fill="#e8403a"/><path d="M230.8 366.4 h3.2 l-1.6 1.7600000000000002z" fill="#444"/><rect x="245.20" y="341.20" width="9.2" height="0.9" fill="#777"/><rect x="245.20" y="343.40" width="9.2" height="0.9" fill="#777"/><rect x="245.20" y="345.60" width="9.2" height="0.9" fill="#b0b0b0"/><rect x="259.00" y="344.00" width="9.6" height="0.9" fill="#777"/><rect x="259.00" y="346.20" width="9.6" height="0.9" fill="#777"/><rect x="259.00" y="348.40" width="9.6" height="0.9" fill="#777"/><rect x="273.60" y="347.00" width="9.2" height="0.9" fill="#777"/><rect x="273.60" y="349.00" width="9.2" height="0.9" fill="#777"/><rect x="273.60" y="351.00" width="9.2" height="0.9" fill="#777"/><rect x="245.20" y="363.40" width="9.2" height="0.9" fill="#9a9a9a"/><rect x="245.20" y="365.50" width="6.4" height="0.9" fill="#9a9a9a"/><rect x="245.20" y="367.60" width="9.2" height="0.9" fill="#9a9a9a"/><rect x="245.20" y="369.70" width="6.4" height="0.9" fill="#9a9a9a"/><rect x="259.00" y="363.40" width="9.6" height="0.9" fill="#9a9a9a"/><rect x="260.60" y="365.50" width="6.4" height="0.9" fill="#9a9a9a"/><rect x="259.00" y="367.60" width="9.6" height="0.9" fill="#9a9a9a"/><rect x="260.60" y="369.70" width="6.4" height="0.9" fill="#9a9a9a"/><rect x="273.40" y="363.40" width="9.6" height="0.9" fill="#9a9a9a"/><rect x="276.60" y="365.50" width="6.4" height="0.9" fill="#9a9a9a"/><rect x="273.40" y="367.60" width="9.6" height="0.9" fill="#9a9a9a"/><rect x="276.60" y="369.70" width="6.4" height="0.9" fill="#9a9a9a"/><text x="293.4" y="351.5" font-family="Liberation Sans" font-size="8" font-weight="bold" fill="#555" transform="rotate(-40 298 348)">ab</text><path d="M297 352.6 l6.4 -6.4" stroke="#555" stroke-width="0.9"/><path d="M306.4 347.2 h3.2 l-1.6 1.7600000000000002z" fill="#444"/><rect x="297.60" y="363.40" width="6.4" height="0.9" fill="#777"/><rect x="297.60" y="365.50" width="6.4" height="0.9" fill="#777"/><rect x="297.60" y="367.60" width="6.4" height="0.9" fill="#777"/><rect x="297.60" y="369.70" width="6.4" height="0.9" fill="#777"/><path d="M293.4 366.6 h3.2 M295 365 l-1.6 1.6 l1.6 1.6" stroke="#2b6cb5" stroke-width="1" fill="none"/><rect x="311.80" y="363.40" width="6.6" height="0.9" fill="#777"/><rect x="311.80" y="365.50" width="6.6" height="0.9" fill="#777"/><rect x="311.80" y="367.60" width="6.6" height="0.9" fill="#777"/><rect x="311.80" y="369.70" width="6.6" height="0.9" fill="#777"/><path d="M307.4 366.6 h3.2 M309 365 l1.6 1.6 l-1.6 1.6" stroke="#2b6cb5" stroke-width="1" fill="none"/><rect x="327.8" y="341.4" width="10.4" height="10.8" fill="#fff" stroke="#8a8a8a" stroke-width="0.9"/><rect x="329.40" y="343.40" width="7" height="0.9" fill="#9a9a9a"/><rect x="329.40" y="346.00" width="7" height="0.9" fill="#9a9a9a"/><rect x="329.40" y="348.60" width="7" height="0.9" fill="#9a9a9a"/><path d="M333 346.2 h3.6 a1.5 1.5 0 0 1 0 3 h-2.4 M335.4 347.8 l-1.4 1.4 l1.4 1.4" stroke="#2b6cb5" stroke-width="0.9" fill="none"/><rect x="327.8" y="361.6" width="10" height="12.2" fill="#fff" stroke="#8a8a8a" stroke-width="0.9"/><path d="M327.8 364.8 h10 M327.8 370.6 h10" stroke="#b4b4b4" stroke-width="0.8"/><path d="M329.4 367.7 h6.8 M330.8 366.4 l-1.4 1.3 l1.4 1.3 M334.8 366.4 l1.4 1.3 l-1.4 1.3" stroke="#2b6cb5" stroke-width="0.8" fill="none"/><path d="M412.9 367.4 h3.2 l-1.6 1.7600000000000002z" fill="#444"/><rect x="425.8" y="339.6" width="84.8" height="15" rx="1" fill="#fff" stroke="#c6c6c6" stroke-width="1"/><path d="M504.4 346.59999999999997 h3.2 l-1.6 1.7600000000000002z" fill="#444"/><text x="430.4" y="370.6" font-family="Liberation Sans" font-size="10" fill="#444" stroke="#444" stroke-width="0.3">$</text><path d="M442.4 366.2 h3.2 l-1.6 1.7600000000000002z" fill="#444"/><text x="450.6" y="370.6" font-family="Liberation Sans" font-size="9.6" fill="#444" stroke="#444" stroke-width="0.25">%</text><text x="464.2" y="368.8" font-family="Liberation Sans" font-size="6" font-weight="bold" fill="#555" textLength="10.4" lengthAdjust="spacingAndGlyphs">000</text><text x="488.6" y="366.4" font-family="Liberation Sans" font-size="6.2" fill="#555">0</text><text x="484.6" y="371.6" font-family="Liberation Sans" font-size="6.2" fill="#555">,00</text><path d="M484.2 364 h4 M485.8 362.4 l-1.6 1.6 l1.6 1.6" stroke="#2b6cb5" stroke-width="1" fill="none"/><text x="501.8" y="366.4" font-family="Liberation Sans" font-size="6.2" fill="#555">,00</text><text x="503.6" y="371.6" font-family="Liberation Sans" font-size="6.2" fill="#555">,0</text><path d="M498.4 368.6 h4 M500.8 367 l1.6 1.6 l-1.6 1.6" stroke="#2b6cb5" stroke-width="1" fill="none"/><rect x="531.8" y="337.8" width="18" height="15.6" fill="#fff" stroke="#8a8a8a" stroke-width="0.9"/><rect x="535.95" y="337.8" width="0.7" height="15.6" fill="#b4b4b4"/><rect x="540.45" y="337.8" width="0.7" height="15.6" fill="#b4b4b4"/><rect x="544.95" y="337.8" width="0.7" height="15.6" fill="#b4b4b4"/><rect x="531.8" y="341.35" width="18" height="0.7" fill="#b4b4b4"/><rect x="531.8" y="345.25" width="18" height="0.7" fill="#b4b4b4"/><rect x="531.8" y="349.15" width="18" height="0.7" fill="#b4b4b4"/><rect x="536.4" y="338.4" width="4.2" height="3.4" fill="#e8403a"/><rect x="536.4" y="342.2" width="7.4" height="3.2" fill="#2b6cb5"/><rect x="536.4" y="346" width="5" height="3.2" fill="#e8403a"/><rect x="536.4" y="349.6" width="2.2" height="3.4" fill="#2b6cb5"/><rect x="540.8" y="348.2" width="11" height="9" rx="0.8" fill="#fff" stroke="#777" stroke-width="0.9"/><path d="M543.6 351.6 h5 M543.6 353.8 h5 M547.4 349.6 l-2.8 6" stroke="#333" stroke-width="0.8"/><path d="M560.5 373.59999999999997 h2.6 l-1.3 1.4300000000000002z" fill="#555"/><rect x="580.8" y="338.8" width="16" height="13.6" fill="#fff" stroke="#8a8a8a" stroke-width="0.9"/><rect x="584.45" y="338.8" width="0.7" height="13.6" fill="#b4b4b4"/><rect x="588.45" y="338.8" width="0.7" height="13.6" fill="#b4b4b4"/><rect x="592.45" y="338.8" width="0.7" height="13.6" fill="#b4b4b4"/><rect x="580.8" y="341.85" width="16" height="0.7" fill="#b4b4b4"/><rect x="580.8" y="345.25" width="16" height="0.7" fill="#b4b4b4"/><rect x="580.8" y="348.65" width="16" height="0.7" fill="#b4b4b4"/><rect x="585" y="342.4" width="11.6" height="9.8" fill="#bcd5ee"/><rect x="588.90" y="342.4" width="0.6" height="9.8" fill="#fff"/><rect x="592.80" y="342.4" width="0.6" height="9.8" fill="#fff"/><rect x="585" y="345.70" width="11.6" height="0.6" fill="#fff"/><rect x="585" y="349.00" width="11.6" height="0.6" fill="#fff"/><path d="M599.6 342.6 l1.2 1.2 l-6.6 7.6 l-1.6 -1.4z" fill="#666"/><path d="M592.4 350.4 l2.2 2 q-1 3.8 -5.6 4.8 q-2.4 0.2 -2.6 0 q1.6 -1 2.6 -3.6 q1 -2.8 3.4 -3.2z" fill="#2b6cb5"/><path d="M607.7 373.59999999999997 h2.6 l-1.3 1.4300000000000002z" fill="#555"/><rect x="622.6" y="337.6" width="16.4" height="14.8" fill="#fff" stroke="#8a8a8a" stroke-width="0.9"/><path d="M622.6 341 h16.4 M622.6 349 h16.4 M626 337.6 v14.8 M636 337.6 v14.8" stroke="#b4b4b4" stroke-width="0.7"/><rect x="626.4" y="341.4" width="9.4" height="7.4" fill="#bcd5ee"/><path d="M641.6 342.6 l1 1 l-6.4 7.4 l-1.4 -1.2z" fill="#666"/><path d="M634.6 350.2 l2 1.8 q-1 3.6 -5.4 4.6 q-2.2 0.2 -2.4 0 q1.6 -1 2.4 -3.4 q1 -2.6 3.4 -3z" fill="#2b6cb5"/><path d="M640.7 373.59999999999997 h2.6 l-1.3 1.4300000000000002z" fill="#555"/><rect x="660.80" y="338.2" width="4.6" height="3" rx="0.4" fill="#fff" stroke="#8a8a8a" stroke-width="0.8"/><rect x="665.40" y="338.2" width="4.6" height="3" rx="0.4" fill="#fff" stroke="#8a8a8a" stroke-width="0.8"/><rect x="667.80" y="343.3" width="4.7" height="3" rx="0.4" fill="#bcd5ee" stroke="#8a8a8a" stroke-width="0.8"/><rect x="672.50" y="343.3" width="4.7" height="3" rx="0.4" fill="#bcd5ee" stroke="#8a8a8a" stroke-width="0.8"/><rect x="660.8" y="348.4" width="9.4" height="6.4" fill="#fff" stroke="#8a8a8a" stroke-width="0.9"/><rect x="665.15" y="348.4" width="0.7" height="6.4" fill="#b4b4b4"/><rect x="660.8" y="351.25" width="9.4" height="0.7" fill="#b4b4b4"/><path d="M660.4 344.8 h5.6 M662.2 343.2 l-1.7 1.6 l1.7 1.6" stroke="#2b6cb5" stroke-width="1" fill="none"/><path d="M667.4 373.4 h3.2 l-1.6 1.7600000000000002z" fill="#444"/><rect x="689.80" y="338.2" width="4.6" height="3" rx="0.4" fill="#fff" stroke="#8a8a8a" stroke-width="0.8"/><rect x="694.40" y="338.2" width="4.6" height="3" rx="0.4" fill="#fff" stroke="#8a8a8a" stroke-width="0.8"/><rect x="694.60" y="343.3" width="4.7" height="3" rx="0.4" fill="#bcd5ee" stroke="#8a8a8a" stroke-width="0.8"/><rect x="689.8" y="348.4" width="9.4" height="6.4" fill="#fff" stroke="#8a8a8a" stroke-width="0.9"/><rect x="694.15" y="348.4" width="0.7" height="6.4" fill="#b4b4b4"/><rect x="689.8" y="351.25" width="9.4" height="0.7" fill="#b4b4b4"/><path d="M700 341.6 l8.2 8 M708.2 341.6 l-8.2 8" stroke="#e8403a" stroke-width="1.2"/><path d="M696.4 373.4 h3.2 l-1.6 1.7600000000000002z" fill="#444"/><path d="M721.6 339 h17.6 M721.6 337.6 v2.8 M739.2 337.6 v2.8 M723.4 339 l1.6 -1.2 M723.4 339 l1.6 1.2 M737.4 339 l-1.6 -1.2 M737.4 339 l-1.6 1.2" stroke="#2b6cb5" stroke-width="0.8" fill="none"/><path d="M721.8 341.8 h17.6 v12.4 q-1.5 1.5 -3 0 q-1.5 -1.5 -3 0 q-1.5 1.5 -3 0 q-1.5 -1.5 -3 0 q-1.5 1.5 -3 0 q-1.5 -1.5 -2.6 0z" fill="#fff" stroke="#8a8a8a" stroke-width="0.9"/><path d="M727.6 341.8 v13 M733.6 341.8 v13 M721.8 345.6 h17.6 M721.8 350 h17.6" stroke="#b4b4b4" stroke-width="0.7"/><rect x="728" y="344.8" width="5.2" height="6.6" fill="#2b6cb5"/><path d="M728.8 373.4 h3.2 l-1.6 1.7600000000000002z" fill="#444"/><path d="M764.6 336.6 h-9 l4.6 4.8 l-4.6 4.8 h9" fill="none" stroke="#333" stroke-width="1.2"/><path d="M809.8 341.59999999999997 h3.2 l-1.6 1.7600000000000002z" fill="#444"/><rect x="755.8" y="351.8" width="8.6" height="9.4" fill="#fff" stroke="#777" stroke-width="0.9"/><rect x="755.4" y="351.4" width="9.4" height="1.6" fill="#555"/><path d="M760.1 354.2 v5 M758.2 357.4 l1.9 1.9 l1.9 -1.9" stroke="#2b6cb5" stroke-width="1.1" fill="none"/><path d="M797.3000000000001 356.59999999999997 h2.8 l-1.4 1.54z" fill="#444"/><path d="M756.2 372.6 l4.4 -5.2 l3.2 2.6 l-4.4 5.2z" fill="#f0a070"/><path d="M756.2 372.6 l2.6 2.2" stroke="#e07040" stroke-width="1"/><path d="M790.5 371.4 h2.8 l-1.4 1.54z" fill="#444"/><text x="825.4" y="345.6" font-family="Liberation Sans" font-size="8.4" font-weight="bold" fill="#2b6cb5">A</text><text x="825.6" y="355.4" font-family="Liberation Sans" font-size="8.4" font-weight="bold" fill="#c0392b" fill-opacity="0.85">Z</text><path d="M831.8 343.6 h11.4 l-4.4 5 v5.4 l-2.6 -1.6 v-3.8z" fill="#8a8a8a"/><path d="M833.4 344.6 h8.2" stroke="#bbb" stroke-width="0.7"/><path d="M844.5 374.59999999999997 h2.6 l-1.3 1.4300000000000002z" fill="#555"/><circle cx="879.6" cy="344.2" r="5.4" fill="none" stroke="#2b6cb5" stroke-width="1.5"/><path d="M875.6 348.4 l-6.6 6.2" stroke="#2b6cb5" stroke-width="2.2" stroke-linecap="round"/><path d="M896.3000000000001 374.59999999999997 h2.6 l-1.3 1.4300000000000002z" fill="#555"/><path d="M986.4 389.2 l2.9 -2.9 l2.9 2.9" fill="none" stroke="#444" stroke-width="1.1"/><rect x="984.4" y="435.3" width="1" height="123.90000000000003" fill="#c6c6c6"/><rect x="987.6" y="424.6" width="9" height="8.6" fill="#fff" stroke="#c6c6c6" stroke-width="0.8"/><path d="M989.9 430.2 h4.4 l-2.2 -2.4z" fill="#444"/><rect x="987.6" y="433.4" width="9" height="51.6" fill="#fff" stroke="#c6c6c6" stroke-width="0.8"/><rect x="987.6" y="551" width="9" height="8" fill="#fff" stroke="#c6c6c6" stroke-width="0.8"/><path d="M989.9 554 h4.4 l-2.2 2.4z" fill="#444"/><rect x="599.3" y="565" width="1" height="1" fill="#a0a0a0"/><rect x="599.3" y="567.8" width="1" height="1" fill="#a0a0a0"/><rect x="599.3" y="570.6" width="1" height="1" fill="#a0a0a0"/><rect x="610.6" y="563.8" width="9.4" height="9.6" fill="#fff" stroke="#c6c6c6" stroke-width="0.8"/><path d="M616.8 566.4 v4.4 l-2.6 -2.2z" fill="#333"/><rect x="620.2" y="563.8" width="334.4" height="9.6" rx="1" fill="#fff" stroke="#c6c6c6" stroke-width="0.8"/><rect x="976.6" y="563.8" width="9" height="9.6" fill="#fff" stroke="#c6c6c6" stroke-width="0.8"/><path d="M979.6 566.4 v4.4 l2.6 -2.2z" fill="#333"/><path d="M20.4 565.4 l-2.2 2.4 l2.2 2.4" fill="none" stroke="#b4b4b4" stroke-width="0.9"/><path d="M36.4 565.4 l2.2 2.4 l-2.2 2.4" fill="none" stroke="#b4b4b4" stroke-width="0.9"/><circle cx="130.9" cy="568" r="5.2" fill="none" stroke="#555" stroke-width="1"/><path d="M130.9 565 v6 M127.9 568 h6" stroke="#555" stroke-width="1.2"/><rect x="813" y="580.4" width="9" height="8" fill="none" stroke="#888" stroke-width="0.0"/><rect x="813.00" y="580.60" width="2.5" height="2.1" fill="#8a8a8a"/><rect x="813.00" y="583.30" width="2.5" height="2.1" fill="#8a8a8a"/><rect x="813.00" y="586.00" width="2.5" height="2.1" fill="#8a8a8a"/><rect x="816.10" y="580.60" width="2.5" height="2.1" fill="#8a8a8a"/><rect x="816.10" y="583.30" width="2.5" height="2.1" fill="#8a8a8a"/><rect x="816.10" y="586.00" width="2.5" height="2.1" fill="#8a8a8a"/><rect x="819.20" y="580.60" width="2.5" height="2.1" fill="#8a8a8a"/><rect x="819.20" y="583.30" width="2.5" height="2.1" fill="#8a8a8a"/><rect x="819.20" y="586.00" width="2.5" height="2.1" fill="#8a8a8a"/><rect x="838.1" y="580.6" width="9" height="7.8" rx="0.8" fill="none" stroke="#8a8a8a" stroke-width="1"/><rect x="840.2" y="582.1999999999999" width="4.8" height="4.6" fill="none" stroke="#8a8a8a" stroke-width="0.8"/><rect x="862.1" y="580.6" width="9" height="7.8" fill="none" stroke="#8a8a8a" stroke-width="1"/><path d="M864.4 580.6 v4 h4.4 v-4" fill="none" stroke="#8a8a8a" stroke-width="0.9"/><rect x="883" y="583.9" width="3.6" height="1.3" fill="#444"/><rect x="886.7" y="584.1" width="68.59999999999991" height="0.8" fill="#b8b8b8"/><rect x="921" y="580.8" width="2.4" height="7.2" fill="#555"/><path d="M956.8 584.6 h5 M959.3 582.1 v5" stroke="#444" stroke-width="1.2"/><rect x="993" y="5" width="1" height="16" fill="#4a4a4a"/><rect x="995" y="42" width="5" height="1" fill="#d8d8d8"/><defs><clipPath id="c10"><rect x="0" y="553" width="16" height="6"/></clipPath></defs><text x="8.4" y="563.2" text-anchor="middle" font-family="Liberation Sans" font-size="9" fill="#444" stroke="#444" stroke-width="0.12" clip-path="url(#c10)">10</text>
</svg>
<div style="position:absolute;left:468.00px;top:6.60px;font-size:8px;line-height:12px;color:#cfe3d6;font-weight:normal;-webkit-text-stroke:0.08px #cfe3d6;white-space:pre;transform:scaleX(0.9221);transform-origin:0 0">Solvetic}  -  Excel</div><div style="position:absolute;left:812.00px;top:6.40px;font-size:8px;line-height:12px;color:#cfe3d6;font-weight:normal;-webkit-text-stroke:0.08px #cfe3d6;white-space:pre;transform:scaleX(0.9760);transform-origin:0 0">Solvetic Internet</div><div style="position:absolute;left:6.40px;top:28.00px;font-size:8.6px;line-height:12px;color:#ffffff;font-weight:normal;-webkit-text-stroke:0.12px #ffffff;white-space:pre;transform:scaleX(0.9282);transform-origin:0 0">Archivo</div><div style="position:absolute;left:49.00px;top:28.00px;font-size:8.6px;line-height:12px;color:#ffffff;font-weight:normal;-webkit-text-stroke:0.12px #ffffff;white-space:pre;transform:scaleX(0.9470);transform-origin:0 0">Inicio</div><div style="position:absolute;left:87.00px;top:28.00px;font-size:8.6px;line-height:12px;color:#ffffff;font-weight:normal;-webkit-text-stroke:0.12px #ffffff;white-space:pre;transform:scaleX(0.8579);transform-origin:0 0">Insertar</div><div style="position:absolute;left:131.00px;top:28.00px;font-size:8.6px;line-height:12px;color:#ffffff;font-weight:normal;-webkit-text-stroke:0.12px #ffffff;white-space:pre;transform:scaleX(0.8818);transform-origin:0 0">Diseño de página</div><div style="position:absolute;left:209.00px;top:28.00px;font-size:8.6px;line-height:12px;color:#ffffff;font-weight:normal;-webkit-text-stroke:0.12px #ffffff;white-space:pre;transform:scaleX(0.8932);transform-origin:0 0">Fórmulas</div><div style="position:absolute;left:260.00px;top:28.00px;font-size:8.6px;line-height:12px;color:#ffffff;font-weight:normal;-webkit-text-stroke:0.12px #ffffff;white-space:pre;transform:scaleX(0.8907);transform-origin:0 0">Datos</div><div style="position:absolute;left:299.00px;top:28.00px;font-size:8.6px;line-height:12px;color:#ffffff;font-weight:normal;-webkit-text-stroke:0.12px #ffffff;white-space:pre;transform:scaleX(0.7893);transform-origin:0 0">Revisar</div><div style="position:absolute;left:341.00px;top:28.00px;font-size:8.6px;line-height:12px;color:#217346;font-weight:normal;-webkit-text-stroke:0.12px #217346;white-space:pre;transform:scaleX(0.8969);transform-origin:0 0">Vista</div><div style="position:absolute;left:388.00px;top:28.00px;font-size:8.6px;line-height:12px;color:#ffffff;font-weight:normal;-webkit-text-stroke:0.12px #ffffff;white-space:pre;transform:scaleX(0.8293);transform-origin:0 0">¿Qué desea hacer?</div><div style="position:absolute;left:944.00px;top:27.60px;font-size:8.6px;line-height:12px;color:#ffffff;font-weight:normal;-webkit-text-stroke:0.12px #ffffff;white-space:pre;transform:scaleX(0.9010);transform-origin:0 0">Compartir</div><div style="position:absolute;left:4.50px;top:70.30px;font-size:7.7px;line-height:12px;color:#262626;font-weight:normal;-webkit-text-stroke:0.2px #262626;white-space:pre;transform:scaleX(1.0451);transform-origin:0 0">Normal</div><div style="position:absolute;left:34.00px;top:70.30px;font-size:7.7px;line-height:12px;color:#262626;font-weight:normal;-webkit-text-stroke:0.2px #262626;white-space:pre;transform:scaleX(0.9539);transform-origin:0 0">Ver salt.</div><div style="position:absolute;left:39.00px;top:81.20px;font-size:7.7px;line-height:12px;color:#262626;font-weight:normal;-webkit-text-stroke:0.2px #262626;white-space:pre;transform:scaleX(0.9224);transform-origin:0 0">Pág.</div><div style="position:absolute;left:68.50px;top:70.30px;font-size:7.7px;line-height:12px;color:#262626;font-weight:normal;-webkit-text-stroke:0.2px #262626;white-space:pre;transform:scaleX(0.9817);transform-origin:0 0">Diseño</div><div style="position:absolute;left:63.00px;top:81.20px;font-size:7.7px;line-height:12px;color:#262626;font-weight:normal;-webkit-text-stroke:0.2px #262626;white-space:pre;transform:scaleX(1.0065);transform-origin:0 0">de página</div><div style="position:absolute;left:116.00px;top:70.30px;font-size:7.7px;line-height:12px;color:#262626;font-weight:normal;-webkit-text-stroke:0.2px #262626;white-space:pre;transform:scaleX(0.9473);transform-origin:0 0">Vistas</div><div style="position:absolute;left:100.50px;top:81.20px;font-size:7.7px;line-height:12px;color:#262626;font-weight:normal;-webkit-text-stroke:0.2px #262626;white-space:pre;transform:scaleX(0.9648);transform-origin:0 0">personalizadas</div><div style="position:absolute;left:54.40px;top:93.20px;font-size:7.7px;line-height:12px;color:#444;font-weight:normal;-webkit-text-stroke:0.2px #444;white-space:pre;transform:scaleX(0.9801);transform-origin:0 0">Vistas de libro</div><div style="position:absolute;left:171.90px;top:53.40px;font-size:7.7px;line-height:12px;color:#b0b0b0;font-weight:normal;-webkit-text-stroke:0.2px #b0b0b0;white-space:pre;transform:scaleX(0.9406);transform-origin:0 0">Regla</div><div style="position:absolute;left:172.00px;top:73.80px;font-size:7.7px;line-height:12px;color:#262626;font-weight:normal;-webkit-text-stroke:0.2px #262626;white-space:pre;transform:scaleX(0.9807);transform-origin:0 0">Líneas de cuadrícula</div><div style="position:absolute;left:259.80px;top:53.40px;font-size:7.7px;line-height:12px;color:#262626;font-weight:normal;-webkit-text-stroke:0.2px #262626;white-space:pre;transform:scaleX(1.0015);transform-origin:0 0">Barra de fórmulas</div><div style="position:absolute;left:260.00px;top:73.80px;font-size:7.7px;line-height:12px;color:#262626;font-weight:normal;-webkit-text-stroke:0.2px #262626;white-space:pre;transform:scaleX(0.9508);transform-origin:0 0">Encabezados</div><div style="position:absolute;left:228.90px;top:92.30px;font-size:7.7px;line-height:12px;color:#444;font-weight:normal;-webkit-text-stroke:0.2px #444;white-space:pre;transform:scaleX(0.9976);transform-origin:0 0">Mostrar</div><div style="position:absolute;left:334.30px;top:70.00px;font-size:7.7px;line-height:12px;color:#262626;font-weight:normal;-webkit-text-stroke:0.2px #262626;white-space:pre;transform:scaleX(1.0429);transform-origin:0 0">Zoom</div><div style="position:absolute;left:363.00px;top:70.00px;font-size:7.7px;line-height:12px;color:#262626;font-weight:normal;-webkit-text-stroke:0.2px #262626;white-space:pre;transform:scaleX(0.9455);transform-origin:0 0">100%</div><div style="position:absolute;left:390.00px;top:70.00px;font-size:7.7px;line-height:12px;color:#262626;font-weight:normal;-webkit-text-stroke:0.2px #262626;white-space:pre;transform:scaleX(1.0283);transform-origin:0 0">Ampliar</div><div style="position:absolute;left:387.00px;top:81.00px;font-size:7.7px;line-height:12px;color:#262626;font-weight:normal;-webkit-text-stroke:0.2px #262626;white-space:pre;transform:scaleX(0.9981);transform-origin:0 0">selección</div><div style="position:absolute;left:366.00px;top:92.60px;font-size:7.7px;line-height:12px;color:#444;font-weight:normal;-webkit-text-stroke:0.2px #444;white-space:pre;transform:scaleX(0.9666);transform-origin:0 0">Zoom</div><div style="position:absolute;left:430.70px;top:70.00px;font-size:7.7px;line-height:12px;color:#262626;font-weight:normal;-webkit-text-stroke:0.2px #262626;white-space:pre;transform:scaleX(1.0030);transform-origin:0 0">Nueva</div><div style="position:absolute;left:428.00px;top:81.00px;font-size:7.7px;line-height:12px;color:#262626;font-weight:normal;-webkit-text-stroke:0.2px #262626;white-space:pre;transform:scaleX(0.9869);transform-origin:0 0">ventana</div><div style="position:absolute;left:459.00px;top:70.00px;font-size:7.7px;line-height:12px;color:#262626;font-weight:normal;-webkit-text-stroke:0.2px #262626;white-space:pre;transform:scaleX(0.9773);transform-origin:0 0">Organizar</div><div style="position:absolute;left:468.00px;top:81.00px;font-size:7.7px;line-height:12px;color:#262626;font-weight:normal;-webkit-text-stroke:0.2px #262626;white-space:pre;transform:scaleX(1.0689);transform-origin:0 0">todo</div><div style="position:absolute;left:495.40px;top:70.00px;font-size:7.7px;line-height:12px;color:#262626;font-weight:normal;-webkit-text-stroke:0.2px #262626;white-space:pre;transform:scaleX(1.0340);transform-origin:0 0">Inmovilizar</div><div style="position:absolute;left:549.70px;top:48.40px;font-size:7.7px;line-height:12px;color:#262626;font-weight:normal;-webkit-text-stroke:0.2px #262626;white-space:pre;transform:scaleX(1.0768);transform-origin:0 0">Dividir</div><div style="position:absolute;left:549.70px;top:63.00px;font-size:7.7px;line-height:12px;color:#262626;font-weight:normal;-webkit-text-stroke:0.2px #262626;white-space:pre;transform:scaleX(1.0895);transform-origin:0 0">Ocultar</div><div style="position:absolute;left:549.70px;top:78.10px;font-size:7.7px;line-height:12px;color:#b0b0b0;font-weight:normal;-webkit-text-stroke:0.2px #b0b0b0;white-space:pre;transform:scaleX(1.0859);transform-origin:0 0">Mostrar</div><div style="position:absolute;left:601.00px;top:48.40px;font-size:7.7px;line-height:12px;color:#262626;font-weight:normal;-webkit-text-stroke:0.2px #262626;white-space:pre;transform:scaleX(0.9745);transform-origin:0 0">Ver en paralelo</div><div style="position:absolute;left:601.00px;top:63.00px;font-size:7.7px;line-height:12px;color:#262626;font-weight:normal;-webkit-text-stroke:0.2px #262626;white-space:pre;transform:scaleX(1.0101);transform-origin:0 0">Desplazamiento sincrónico</div><div style="position:absolute;left:601.00px;top:78.10px;font-size:7.7px;line-height:12px;color:#262626;font-weight:normal;-webkit-text-stroke:0.2px #262626;white-space:pre;transform:scaleX(0.9860);transform-origin:0 0">Restablecer posición de la ventana</div><div style="position:absolute;left:584.00px;top:92.80px;font-size:7.7px;line-height:12px;color:#444;font-weight:normal;-webkit-text-stroke:0.2px #444;white-space:pre;transform:scaleX(0.9674);transform-origin:0 0">Ventana</div><div style="position:absolute;left:734.00px;top:70.60px;font-size:7.7px;line-height:12px;color:#262626;font-weight:normal;-webkit-text-stroke:0.2px #262626;white-space:pre;transform:scaleX(1.0116);transform-origin:0 0">Cambiar</div><div style="position:absolute;left:730.60px;top:81.30px;font-size:7.7px;line-height:12px;color:#262626;font-weight:normal;-webkit-text-stroke:0.2px #262626;white-space:pre;transform:scaleX(1.0063);transform-origin:0 0">ventanas</div><div style="position:absolute;left:776.00px;top:70.60px;font-size:7.7px;line-height:12px;color:#262626;font-weight:normal;-webkit-text-stroke:0.2px #262626;white-space:pre;transform:scaleX(0.9919);transform-origin:0 0">Macros</div><div style="position:absolute;left:776.00px;top:92.80px;font-size:7.7px;line-height:12px;color:#444;font-weight:normal;-webkit-text-stroke:0.2px #444;white-space:pre;transform:scaleX(0.9919);transform-origin:0 0">Macros</div><div style="position:absolute;left:8.40px;top:114.20px;font-size:8px;line-height:12px;color:#444;font-weight:normal;-webkit-text-stroke:0.05px #444;white-space:pre;transform:scaleX(0.9391);transform-origin:0 0">E1</div><div style="position:absolute;left:474.00px;top:295.20px;font-size:8px;line-height:12px;color:#cfe3d6;font-weight:normal;-webkit-text-stroke:0.08px #cfe3d6;white-space:pre;transform:scaleX(0.9295);transform-origin:0 0">Libro2  -  Excel</div><div style="position:absolute;left:817.00px;top:294.80px;font-size:8px;line-height:12px;color:#cfe3d6;font-weight:normal;-webkit-text-stroke:0.08px #cfe3d6;white-space:pre;transform:scaleX(0.9586);transform-origin:0 0">Solvetic Internet</div><div style="position:absolute;left:5.80px;top:316.50px;font-size:8.6px;line-height:12px;color:#ffffff;font-weight:normal;-webkit-text-stroke:0.12px #ffffff;white-space:pre;transform:scaleX(0.9387);transform-origin:0 0">Archivo</div><div style="position:absolute;left:48.00px;top:316.50px;font-size:8.6px;line-height:12px;color:#217346;font-weight:normal;-webkit-text-stroke:0.12px #217346;white-space:pre;transform:scaleX(0.9470);transform-origin:0 0">Inicio</div><div style="position:absolute;left:85.80px;top:316.50px;font-size:8.6px;line-height:12px;color:#ffffff;font-weight:normal;-webkit-text-stroke:0.12px #ffffff;white-space:pre;transform:scaleX(0.8854);transform-origin:0 0">Insertar</div><div style="position:absolute;left:130.80px;top:316.50px;font-size:8.6px;line-height:12px;color:#ffffff;font-weight:normal;-webkit-text-stroke:0.12px #ffffff;white-space:pre;transform:scaleX(0.8848);transform-origin:0 0">Diseño de página</div><div style="position:absolute;left:208.80px;top:316.50px;font-size:8.6px;line-height:12px;color:#ffffff;font-weight:normal;-webkit-text-stroke:0.12px #ffffff;white-space:pre;transform:scaleX(0.8848);transform-origin:0 0">Fórmulas</div><div style="position:absolute;left:259.50px;top:316.50px;font-size:8.6px;line-height:12px;color:#ffffff;font-weight:normal;-webkit-text-stroke:0.12px #ffffff;white-space:pre;transform:scaleX(0.8685);transform-origin:0 0">Datos</div><div style="position:absolute;left:297.70px;top:316.50px;font-size:8.6px;line-height:12px;color:#ffffff;font-weight:normal;-webkit-text-stroke:0.12px #ffffff;white-space:pre;transform:scaleX(0.8305);transform-origin:0 0">Revisar</div><div style="position:absolute;left:340.90px;top:316.50px;font-size:8.6px;line-height:12px;color:#ffffff;font-weight:normal;-webkit-text-stroke:0.12px #ffffff;white-space:pre;transform:scaleX(0.8495);transform-origin:0 0">Vista</div><div style="position:absolute;left:387.00px;top:316.00px;font-size:8.6px;line-height:12px;color:#ffffff;font-weight:normal;-webkit-text-stroke:0.12px #ffffff;white-space:pre;transform:scaleX(0.8346);transform-origin:0 0">¿Qué desea hacer?</div><div style="position:absolute;left:949.00px;top:316.40px;font-size:8.6px;line-height:12px;color:#ffffff;font-weight:normal;-webkit-text-stroke:0.12px #ffffff;white-space:pre;transform:scaleX(0.9010);transform-origin:0 0">Compartir</div><div style="position:absolute;left:6.50px;top:359.20px;font-size:7.7px;line-height:12px;color:#262626;font-weight:normal;-webkit-text-stroke:0.2px #262626;white-space:pre;transform:scaleX(0.9651);transform-origin:0 0">Pegar</div><div style="position:absolute;left:44.10px;top:336.80px;font-size:7.7px;line-height:12px;color:#262626;font-weight:normal;-webkit-text-stroke:0.2px #262626;white-space:pre;transform:scaleX(1.0159);transform-origin:0 0">Cortar</div><div style="position:absolute;left:44.00px;top:351.50px;font-size:7.7px;line-height:12px;color:#262626;font-weight:normal;-webkit-text-stroke:0.2px #262626;white-space:pre;transform:scaleX(1.0240);transform-origin:0 0">Copiar</div><div style="position:absolute;left:44.00px;top:366.90px;font-size:7.7px;line-height:12px;color:#262626;font-weight:normal;-webkit-text-stroke:0.2px #262626;white-space:pre;transform:scaleX(1.0463);transform-origin:0 0">Copiar formato</div><div style="position:absolute;left:24.70px;top:381.80px;font-size:7.7px;line-height:12px;color:#444;font-weight:normal;-webkit-text-stroke:0.2px #444;white-space:pre;transform:scaleX(0.9644);transform-origin:0 0">Portapapeles</div><div style="position:absolute;left:110.20px;top:342.00px;font-size:7.7px;line-height:12px;color:#555;font-weight:normal;-webkit-text-stroke:0.05px #555;white-space:pre;transform:scaleX(0.9910);transform-origin:0 0">Calibri</div><div style="position:absolute;left:182.50px;top:342.00px;font-size:7.7px;line-height:12px;color:#555;font-weight:normal;-webkit-text-stroke:0.05px #555;white-space:pre;transform:scaleX(0.8391);transform-origin:0 0">11</div><div style="position:absolute;left:155.20px;top:381.50px;font-size:7.7px;line-height:12px;color:#444;font-weight:normal;-webkit-text-stroke:0.2px #444;white-space:pre;transform:scaleX(0.9650);transform-origin:0 0">Fuente</div><div style="position:absolute;left:340.50px;top:342.40px;font-size:7.7px;line-height:12px;color:#262626;font-weight:normal;-webkit-text-stroke:0.2px #262626;white-space:pre;transform:scaleX(0.9945);transform-origin:0 0">Ajustar texto</div><div style="position:absolute;left:340.50px;top:362.70px;font-size:7.7px;line-height:12px;color:#262626;font-weight:normal;-webkit-text-stroke:0.2px #262626;white-space:pre;transform:scaleX(1.0126);transform-origin:0 0">Combinar y centrar</div><div style="position:absolute;left:308.00px;top:381.90px;font-size:7.7px;line-height:12px;color:#444;font-weight:normal;-webkit-text-stroke:0.2px #444;white-space:pre;transform:scaleX(0.9920);transform-origin:0 0">Alineación</div><div style="position:absolute;left:427.90px;top:341.80px;font-size:7.7px;line-height:12px;color:#555;font-weight:normal;-webkit-text-stroke:0.05px #555;white-space:pre;transform:scaleX(0.9503);transform-origin:0 0">General</div><div style="position:absolute;left:450.00px;top:381.50px;font-size:7.7px;line-height:12px;color:#444;font-weight:normal;-webkit-text-stroke:0.2px #444;white-space:pre;transform:scaleX(0.9618);transform-origin:0 0">Número</div><div style="position:absolute;left:527.00px;top:358.80px;font-size:7.7px;line-height:12px;color:#262626;font-weight:normal;-webkit-text-stroke:0.2px #262626;white-space:pre;transform:scaleX(1.0096);transform-origin:0 0">Formato</div><div style="position:absolute;left:518.50px;top:369.40px;font-size:7.7px;line-height:12px;color:#262626;font-weight:normal;-webkit-text-stroke:0.2px #262626;white-space:pre;transform:scaleX(1.0658);transform-origin:0 0">condicional</div><div style="position:absolute;left:568.40px;top:359.20px;font-size:7.7px;line-height:12px;color:#262626;font-weight:normal;-webkit-text-stroke:0.2px #262626;white-space:pre;transform:scaleX(1.0248);transform-origin:0 0">Dar formato</div><div style="position:absolute;left:567.60px;top:369.40px;font-size:7.7px;line-height:12px;color:#262626;font-weight:normal;-webkit-text-stroke:0.2px #262626;white-space:pre;transform:scaleX(1.0343);transform-origin:0 0">como tabla</div><div style="position:absolute;left:615.00px;top:359.20px;font-size:7.7px;line-height:12px;color:#262626;font-weight:normal;-webkit-text-stroke:0.2px #262626;white-space:pre;transform:scaleX(0.9597);transform-origin:0 0">Estilos de</div><div style="position:absolute;left:619.00px;top:369.40px;font-size:7.7px;line-height:12px;color:#262626;font-weight:normal;-webkit-text-stroke:0.2px #262626;white-space:pre;transform:scaleX(1.0603);transform-origin:0 0">celda</div><div style="position:absolute;left:571.60px;top:381.90px;font-size:7.7px;line-height:12px;color:#444;font-weight:normal;-webkit-text-stroke:0.2px #444;white-space:pre;transform:scaleX(0.9446);transform-origin:0 0">Estilos</div><div style="position:absolute;left:656.00px;top:359.20px;font-size:7.7px;line-height:12px;color:#262626;font-weight:normal;-webkit-text-stroke:0.2px #262626;white-space:pre;transform:scaleX(0.9592);transform-origin:0 0">Insertar</div><div style="position:absolute;left:685.00px;top:359.20px;font-size:7.7px;line-height:12px;color:#262626;font-weight:normal;-webkit-text-stroke:0.2px #262626;white-space:pre;transform:scaleX(0.9719);transform-origin:0 0">Eliminar</div><div style="position:absolute;left:716.00px;top:359.20px;font-size:7.7px;line-height:12px;color:#262626;font-weight:normal;-webkit-text-stroke:0.2px #262626;white-space:pre;transform:scaleX(1.0131);transform-origin:0 0">Formato</div><div style="position:absolute;left:690.00px;top:381.90px;font-size:7.7px;line-height:12px;color:#444;font-weight:normal;-webkit-text-stroke:0.2px #444;white-space:pre;transform:scaleX(0.9023);transform-origin:0 0">Celdas</div><div style="position:absolute;left:767.20px;top:336.20px;font-size:7.7px;line-height:12px;color:#262626;font-weight:normal;-webkit-text-stroke:0.2px #262626;white-space:pre;transform:scaleX(1.0426);transform-origin:0 0">Autosuma</div><div style="position:absolute;left:767.20px;top:351.20px;font-size:7.7px;line-height:12px;color:#262626;font-weight:normal;-webkit-text-stroke:0.2px #262626;white-space:pre;transform:scaleX(0.9811);transform-origin:0 0">Rellenar</div><div style="position:absolute;left:767.20px;top:366.00px;font-size:7.7px;line-height:12px;color:#262626;font-weight:normal;-webkit-text-stroke:0.2px #262626;white-space:pre;transform:scaleX(0.9972);transform-origin:0 0">Borrar</div><div style="position:absolute;left:817.90px;top:358.90px;font-size:7.7px;line-height:12px;color:#262626;font-weight:normal;-webkit-text-stroke:0.2px #262626;white-space:pre;transform:scaleX(0.9799);transform-origin:0 0">Ordenar y</div><div style="position:absolute;left:823.00px;top:369.20px;font-size:7.7px;line-height:12px;color:#262626;font-weight:normal;-webkit-text-stroke:0.2px #262626;white-space:pre;transform:scaleX(1.1115);transform-origin:0 0">filtrar</div><div style="position:absolute;left:862.40px;top:358.90px;font-size:7.7px;line-height:12px;color:#262626;font-weight:normal;-webkit-text-stroke:0.2px #262626;white-space:pre;transform:scaleX(0.9697);transform-origin:0 0">Buscar y</div><div style="position:absolute;left:854.80px;top:369.20px;font-size:7.7px;line-height:12px;color:#262626;font-weight:normal;-webkit-text-stroke:0.2px #262626;white-space:pre;transform:scaleX(1.0080);transform-origin:0 0">seleccionar</div><div style="position:absolute;left:814.50px;top:381.00px;font-size:7.7px;line-height:12px;color:#444;font-weight:normal;-webkit-text-stroke:0.2px #444;white-space:pre;transform:scaleX(0.9556);transform-origin:0 0">Edición</div><div style="position:absolute;left:7.70px;top:402.80px;font-size:8px;line-height:12px;color:#444;font-weight:normal;-webkit-text-stroke:0.05px #444;white-space:pre;transform:scaleX(1.0718);transform-origin:0 0">A1</div><div style="position:absolute;left:40.57px;top:134.60px;font-size:8.2px;line-height:12px;color:#444;font-weight:normal;-webkit-text-stroke:0.1px #444;white-space:pre;transform:scaleX(1.0000);transform-origin:0 0">A</div><div style="position:absolute;left:104.07px;top:134.60px;font-size:8.2px;line-height:12px;color:#444;font-weight:normal;-webkit-text-stroke:0.1px #444;white-space:pre;transform:scaleX(1.0000);transform-origin:0 0">B</div><div style="position:absolute;left:170.69px;top:134.60px;font-size:8.2px;line-height:12px;color:#444;font-weight:normal;-webkit-text-stroke:0.1px #444;white-space:pre;transform:scaleX(1.0000);transform-origin:0 0">C</div><div style="position:absolute;left:226.40px;top:134.60px;font-size:8.2px;line-height:12px;color:#444;font-weight:normal;-webkit-text-stroke:0.1px #444;white-space:pre;transform:scaleX(1.0000);transform-origin:0 0">D</div><div style="position:absolute;left:278.76px;top:134.60px;font-size:8.2px;line-height:12px;color:#3a6e50;font-weight:normal;-webkit-text-stroke:0.1px #3a6e50;white-space:pre;transform:scaleX(1.0000);transform-origin:0 0">E</div><div style="position:absolute;left:331.12px;top:134.60px;font-size:8.2px;line-height:12px;color:#444;font-weight:normal;-webkit-text-stroke:0.1px #444;white-space:pre;transform:scaleX(1.0000);transform-origin:0 0">F</div><div style="position:absolute;left:382.57px;top:134.60px;font-size:8.2px;line-height:12px;color:#444;font-weight:normal;-webkit-text-stroke:0.1px #444;white-space:pre;transform:scaleX(1.0000);transform-origin:0 0">G</div><div style="position:absolute;left:434.92px;top:134.60px;font-size:8.2px;line-height:12px;color:#444;font-weight:normal;-webkit-text-stroke:0.1px #444;white-space:pre;transform:scaleX(1.0000);transform-origin:0 0">H</div><div style="position:absolute;left:488.87px;top:134.60px;font-size:8.2px;line-height:12px;color:#444;font-weight:normal;-webkit-text-stroke:0.1px #444;white-space:pre;transform:scaleX(1.0000);transform-origin:0 0">I</div><div style="position:absolute;left:540.10px;top:134.60px;font-size:8.2px;line-height:12px;color:#444;font-weight:normal;-webkit-text-stroke:0.1px #444;white-space:pre;transform:scaleX(1.0000);transform-origin:0 0">J</div><div style="position:absolute;left:591.54px;top:134.60px;font-size:8.2px;line-height:12px;color:#444;font-weight:normal;-webkit-text-stroke:0.1px #444;white-space:pre;transform:scaleX(1.0000);transform-origin:0 0">K</div><div style="position:absolute;left:644.12px;top:134.60px;font-size:8.2px;line-height:12px;color:#444;font-weight:normal;-webkit-text-stroke:0.1px #444;white-space:pre;transform:scaleX(1.0000);transform-origin:0 0">L</div><div style="position:absolute;left:695.12px;top:134.60px;font-size:8.2px;line-height:12px;color:#444;font-weight:normal;-webkit-text-stroke:0.1px #444;white-space:pre;transform:scaleX(1.0000);transform-origin:0 0">M</div><div style="position:absolute;left:747.70px;top:134.60px;font-size:8.2px;line-height:12px;color:#444;font-weight:normal;-webkit-text-stroke:0.1px #444;white-space:pre;transform:scaleX(1.0000);transform-origin:0 0">N</div><div style="position:absolute;left:799.61px;top:134.60px;font-size:8.2px;line-height:12px;color:#444;font-weight:normal;-webkit-text-stroke:0.1px #444;white-space:pre;transform:scaleX(1.0000);transform-origin:0 0">O</div><div style="position:absolute;left:852.19px;top:134.60px;font-size:8.2px;line-height:12px;color:#444;font-weight:normal;-webkit-text-stroke:0.1px #444;white-space:pre;transform:scaleX(1.0000);transform-origin:0 0">P</div><div style="position:absolute;left:903.87px;top:134.60px;font-size:8.2px;line-height:12px;color:#444;font-weight:normal;-webkit-text-stroke:0.1px #444;white-space:pre;transform:scaleX(1.0000);transform-origin:0 0">Q</div><div style="position:absolute;left:956.22px;top:134.60px;font-size:8.2px;line-height:12px;color:#444;font-weight:normal;-webkit-text-stroke:0.1px #444;white-space:pre;transform:scaleX(1.0000);transform-origin:0 0">R</div><div style="position:absolute;left:5.98px;top:147.65px;font-size:8.7px;line-height:12px;color:#217346;font-weight:normal;-webkit-text-stroke:0.1px #217346;white-space:pre;transform:scaleX(1.0000);transform-origin:0 0">1</div><div style="position:absolute;left:5.98px;top:160.75px;font-size:8.7px;line-height:12px;color:#444;font-weight:normal;-webkit-text-stroke:0.1px #444;white-space:pre;transform:scaleX(1.0000);transform-origin:0 0">2</div><div style="position:absolute;left:5.98px;top:173.85px;font-size:8.7px;line-height:12px;color:#444;font-weight:normal;-webkit-text-stroke:0.1px #444;white-space:pre;transform:scaleX(1.0000);transform-origin:0 0">3</div><div style="position:absolute;left:5.98px;top:186.95px;font-size:8.7px;line-height:12px;color:#444;font-weight:normal;-webkit-text-stroke:0.1px #444;white-space:pre;transform:scaleX(1.0000);transform-origin:0 0">4</div><div style="position:absolute;left:5.98px;top:200.05px;font-size:8.7px;line-height:12px;color:#444;font-weight:normal;-webkit-text-stroke:0.1px #444;white-space:pre;transform:scaleX(1.0000);transform-origin:0 0">5</div><div style="position:absolute;left:5.98px;top:213.15px;font-size:8.7px;line-height:12px;color:#444;font-weight:normal;-webkit-text-stroke:0.1px #444;white-space:pre;transform:scaleX(1.0000);transform-origin:0 0">6</div><div style="position:absolute;left:5.98px;top:226.25px;font-size:8.7px;line-height:12px;color:#444;font-weight:normal;-webkit-text-stroke:0.1px #444;white-space:pre;transform:scaleX(1.0000);transform-origin:0 0">7</div><div style="position:absolute;left:5.98px;top:239.35px;font-size:8.7px;line-height:12px;color:#444;font-weight:normal;-webkit-text-stroke:0.1px #444;white-space:pre;transform:scaleX(1.0000);transform-origin:0 0">8</div><div style="position:absolute;left:27.20px;top:147.90px;font-size:9.8px;line-height:12px;color:#161616;font-weight:normal;-webkit-text-stroke:0.28px #161616;white-space:pre;transform:scaleX(0.9100);transform-origin:0 0">Sistema</div><div style="position:absolute;left:91.93px;top:147.90px;font-size:9.8px;line-height:12px;color:#161616;font-weight:normal;-webkit-text-stroke:0.28px #161616;white-space:pre;transform:scaleX(0.9100);transform-origin:0 0">Version</div><div style="position:absolute;left:146.89px;top:147.90px;font-size:9.8px;line-height:12px;color:#161616;font-weight:normal;-webkit-text-stroke:0.28px #161616;white-space:pre;transform:scaleX(0.9100);transform-origin:0 0">Desarrollador</div><div style="position:absolute;left:25.21px;top:161.00px;font-size:9.8px;line-height:12px;color:#161616;font-weight:normal;-webkit-text-stroke:0.28px #161616;white-space:pre;transform:scaleX(0.9100);transform-origin:0 0">Windows</div><div style="position:absolute;left:101.84px;top:161.00px;font-size:9.8px;line-height:12px;color:#161616;font-weight:normal;-webkit-text-stroke:0.28px #161616;white-space:pre;transform:scaleX(0.9100);transform-origin:0 0">10</div><div style="position:absolute;left:155.56px;top:161.00px;font-size:9.8px;line-height:12px;color:#161616;font-weight:normal;-webkit-text-stroke:0.28px #161616;white-space:pre;transform:scaleX(0.9100);transform-origin:0 0">Microsoft</div><div style="position:absolute;left:28.43px;top:174.10px;font-size:9.8px;line-height:12px;color:#161616;font-weight:normal;-webkit-text-stroke:0.28px #161616;white-space:pre;transform:scaleX(0.9100);transform-origin:0 0">macOS</div><div style="position:absolute;left:84.50px;top:174.10px;font-size:9.8px;line-height:12px;color:#161616;font-weight:normal;-webkit-text-stroke:0.28px #161616;white-space:pre;transform:scaleX(0.9100);transform-origin:0 0">High Sierra</div><div style="position:absolute;left:162.25px;top:174.10px;font-size:9.8px;line-height:12px;color:#161616;font-weight:normal;-webkit-text-stroke:0.28px #161616;white-space:pre;transform:scaleX(0.9100);transform-origin:0 0">Apple</div><div style="position:absolute;left:32.64px;top:187.20px;font-size:9.8px;line-height:12px;color:#161616;font-weight:normal;-webkit-text-stroke:0.28px #161616;white-space:pre;transform:scaleX(0.9100);transform-origin:0 0">Linux</div><div style="position:absolute;left:92.67px;top:187.20px;font-size:9.8px;line-height:12px;color:#161616;font-weight:normal;-webkit-text-stroke:0.28px #161616;white-space:pre;transform:scaleX(0.9100);transform-origin:0 0">Fedora</div><div style="position:absolute;left:159.52px;top:187.20px;font-size:9.8px;line-height:12px;color:#161616;font-weight:normal;-webkit-text-stroke:0.28px #161616;white-space:pre;transform:scaleX(0.9100);transform-origin:0 0">Fedora</div><div style="position:absolute;left:25.21px;top:200.30px;font-size:9.8px;line-height:12px;color:#161616;font-weight:normal;-webkit-text-stroke:0.28px #161616;white-space:pre;transform:scaleX(0.9100);transform-origin:0 0">Windows</div><div style="position:absolute;left:82.51px;top:200.30px;font-size:9.8px;line-height:12px;color:#161616;font-weight:normal;-webkit-text-stroke:0.28px #161616;white-space:pre;transform:scaleX(0.9100);transform-origin:0 0">Server 2016</div><div style="position:absolute;left:155.56px;top:200.30px;font-size:9.8px;line-height:12px;color:#161616;font-weight:normal;-webkit-text-stroke:0.28px #161616;white-space:pre;transform:scaleX(0.9100);transform-origin:0 0">Microsoft</div><div style="position:absolute;left:32.64px;top:213.40px;font-size:9.8px;line-height:12px;color:#161616;font-weight:normal;-webkit-text-stroke:0.28px #161616;white-space:pre;transform:scaleX(0.9100);transform-origin:0 0">Linux</div><div style="position:absolute;left:86.73px;top:213.40px;font-size:9.8px;line-height:12px;color:#161616;font-weight:normal;-webkit-text-stroke:0.28px #161616;white-space:pre;transform:scaleX(0.9100);transform-origin:0 0">CEntOS 7</div><div style="position:absolute;left:157.79px;top:213.40px;font-size:9.8px;line-height:12px;color:#161616;font-weight:normal;-webkit-text-stroke:0.28px #161616;white-space:pre;transform:scaleX(0.9100);transform-origin:0 0">CentOS</div><div style="position:absolute;left:73.50px;top:259.00px;font-size:8.2px;line-height:12px;color:#217346;font-weight:bold;-webkit-text-stroke:0.2px #217346;white-space:pre;transform:scaleX(1.0030);transform-origin:0 0">Solvetic</div><div style="position:absolute;left:121.00px;top:259.20px;font-size:8.2px;line-height:12px;color:#444;font-weight:normal;-webkit-text-stroke:0.2px #444;white-space:pre;transform:scaleX(1.0225);transform-origin:0 0">Prueba</div><div style="position:absolute;left:164.20px;top:259.20px;font-size:8.2px;line-height:12px;color:#444;font-weight:normal;-webkit-text-stroke:0.2px #444;white-space:pre;transform:scaleX(0.9829);transform-origin:0 0">Acceso</div><div style="position:absolute;left:207.80px;top:259.20px;font-size:8.2px;line-height:12px;color:#444;font-weight:normal;-webkit-text-stroke:0.2px #444;white-space:pre;transform:scaleX(1.0277);transform-origin:0 0">Hoja4</div><div style="position:absolute;left:5.30px;top:275.80px;font-size:7.4px;line-height:12px;color:#444;font-weight:normal;-webkit-text-stroke:0.05px #444;white-space:pre;transform:scaleX(0.9856);transform-origin:0 0">Listo</div><div style="position:absolute;left:964.60px;top:275.10px;font-size:7.4px;line-height:12px;color:#444;font-weight:normal;-webkit-text-stroke:0.05px #444;white-space:pre;transform:scaleX(0.9098);transform-origin:0 0">100%</div><div style="position:absolute;left:39.65px;top:423.95px;font-size:8.2px;line-height:12px;color:#444;font-weight:normal;-webkit-text-stroke:0.1px #444;white-space:pre;transform:scaleX(1.0000);transform-origin:0 0">A</div><div style="position:absolute;left:91.82px;top:423.95px;font-size:8.2px;line-height:12px;color:#444;font-weight:normal;-webkit-text-stroke:0.1px #444;white-space:pre;transform:scaleX(1.0000);transform-origin:0 0">B</div><div style="position:absolute;left:143.76px;top:423.95px;font-size:8.2px;line-height:12px;color:#444;font-weight:normal;-webkit-text-stroke:0.1px #444;white-space:pre;transform:scaleX(1.0000);transform-origin:0 0">C</div><div style="position:absolute;left:195.93px;top:423.95px;font-size:8.2px;line-height:12px;color:#444;font-weight:normal;-webkit-text-stroke:0.1px #444;white-space:pre;transform:scaleX(1.0000);transform-origin:0 0">D</div><div style="position:absolute;left:248.33px;top:423.95px;font-size:8.2px;line-height:12px;color:#444;font-weight:normal;-webkit-text-stroke:0.1px #444;white-space:pre;transform:scaleX(1.0000);transform-origin:0 0">E</div><div style="position:absolute;left:300.73px;top:423.95px;font-size:8.2px;line-height:12px;color:#444;font-weight:normal;-webkit-text-stroke:0.1px #444;white-space:pre;transform:scaleX(1.0000);transform-origin:0 0">F</div><div style="position:absolute;left:352.22px;top:423.95px;font-size:8.2px;line-height:12px;color:#444;font-weight:normal;-webkit-text-stroke:0.1px #444;white-space:pre;transform:scaleX(1.0000);transform-origin:0 0">G</div><div style="position:absolute;left:404.61px;top:423.95px;font-size:8.2px;line-height:12px;color:#444;font-weight:normal;-webkit-text-stroke:0.1px #444;white-space:pre;transform:scaleX(1.0000);transform-origin:0 0">H</div><div style="position:absolute;left:458.60px;top:423.95px;font-size:8.2px;line-height:12px;color:#444;font-weight:normal;-webkit-text-stroke:0.1px #444;white-space:pre;transform:scaleX(1.0000);transform-origin:0 0">I</div><div style="position:absolute;left:509.87px;top:423.95px;font-size:8.2px;line-height:12px;color:#444;font-weight:normal;-webkit-text-stroke:0.1px #444;white-space:pre;transform:scaleX(1.0000);transform-origin:0 0">J</div><div style="position:absolute;left:561.35px;top:423.95px;font-size:8.2px;line-height:12px;color:#444;font-weight:normal;-webkit-text-stroke:0.1px #444;white-space:pre;transform:scaleX(1.0000);transform-origin:0 0">K</div><div style="position:absolute;left:613.97px;top:423.95px;font-size:8.2px;line-height:12px;color:#444;font-weight:normal;-webkit-text-stroke:0.1px #444;white-space:pre;transform:scaleX(1.0000);transform-origin:0 0">L</div><div style="position:absolute;left:665.01px;top:423.95px;font-size:8.2px;line-height:12px;color:#444;font-weight:normal;-webkit-text-stroke:0.1px #444;white-space:pre;transform:scaleX(1.0000);transform-origin:0 0">M</div><div style="position:absolute;left:717.63px;top:423.95px;font-size:8.2px;line-height:12px;color:#444;font-weight:normal;-webkit-text-stroke:0.1px #444;white-space:pre;transform:scaleX(1.0000);transform-origin:0 0">N</div><div style="position:absolute;left:769.58px;top:423.95px;font-size:8.2px;line-height:12px;color:#444;font-weight:normal;-webkit-text-stroke:0.1px #444;white-space:pre;transform:scaleX(1.0000);transform-origin:0 0">O</div><div style="position:absolute;left:822.20px;top:423.95px;font-size:8.2px;line-height:12px;color:#444;font-weight:normal;-webkit-text-stroke:0.1px #444;white-space:pre;transform:scaleX(1.0000);transform-origin:0 0">P</div><div style="position:absolute;left:873.92px;top:423.95px;font-size:8.2px;line-height:12px;color:#444;font-weight:normal;-webkit-text-stroke:0.1px #444;white-space:pre;transform:scaleX(1.0000);transform-origin:0 0">Q</div><div style="position:absolute;left:926.31px;top:423.95px;font-size:8.2px;line-height:12px;color:#444;font-weight:normal;-webkit-text-stroke:0.1px #444;white-space:pre;transform:scaleX(1.0000);transform-origin:0 0">R</div><div style="position:absolute;left:978.71px;top:423.95px;font-size:8.2px;line-height:12px;color:#444;font-weight:normal;-webkit-text-stroke:0.1px #444;white-space:pre;transform:scaleX(1.0000);transform-origin:0 0">S</div><div style="position:absolute;left:5.98px;top:436.32px;font-size:8.7px;line-height:12px;color:#444;font-weight:normal;-webkit-text-stroke:0.1px #444;white-space:pre;transform:scaleX(1.0000);transform-origin:0 0">1</div><div style="position:absolute;left:5.98px;top:449.38px;font-size:8.7px;line-height:12px;color:#444;font-weight:normal;-webkit-text-stroke:0.1px #444;white-space:pre;transform:scaleX(1.0000);transform-origin:0 0">2</div><div style="position:absolute;left:5.98px;top:462.43px;font-size:8.7px;line-height:12px;color:#444;font-weight:normal;-webkit-text-stroke:0.1px #444;white-space:pre;transform:scaleX(1.0000);transform-origin:0 0">3</div><div style="position:absolute;left:5.98px;top:475.48px;font-size:8.7px;line-height:12px;color:#444;font-weight:normal;-webkit-text-stroke:0.1px #444;white-space:pre;transform:scaleX(1.0000);transform-origin:0 0">4</div><div style="position:absolute;left:5.98px;top:488.52px;font-size:8.7px;line-height:12px;color:#444;font-weight:normal;-webkit-text-stroke:0.1px #444;white-space:pre;transform:scaleX(1.0000);transform-origin:0 0">5</div><div style="position:absolute;left:5.98px;top:501.57px;font-size:8.7px;line-height:12px;color:#444;font-weight:normal;-webkit-text-stroke:0.1px #444;white-space:pre;transform:scaleX(1.0000);transform-origin:0 0">6</div><div style="position:absolute;left:5.98px;top:514.62px;font-size:8.7px;line-height:12px;color:#444;font-weight:normal;-webkit-text-stroke:0.1px #444;white-space:pre;transform:scaleX(1.0000);transform-origin:0 0">7</div><div style="position:absolute;left:5.98px;top:527.67px;font-size:8.7px;line-height:12px;color:#444;font-weight:normal;-webkit-text-stroke:0.1px #444;white-space:pre;transform:scaleX(1.0000);transform-origin:0 0">8</div><div style="position:absolute;left:5.98px;top:540.73px;font-size:8.7px;line-height:12px;color:#444;font-weight:normal;-webkit-text-stroke:0.1px #444;white-space:pre;transform:scaleX(1.0000);transform-origin:0 0">9</div><div style="position:absolute;left:73.30px;top:562.50px;font-size:8.2px;line-height:12px;color:#217346;font-weight:bold;-webkit-text-stroke:0.2px #217346;white-space:pre;transform:scaleX(1.0181);transform-origin:0 0">Hoja1</div><div style="position:absolute;left:4.80px;top:579.60px;font-size:7.4px;line-height:12px;color:#444;font-weight:normal;-webkit-text-stroke:0.05px #444;white-space:pre;transform:scaleX(0.9728);transform-origin:0 0">Listo</div><div style="position:absolute;left:969.40px;top:579.20px;font-size:7.4px;line-height:12px;color:#444;font-weight:normal;-webkit-text-stroke:0.05px #444;white-space:pre;transform:scaleX(0.8727);transform-origin:0 0">100%</div><div style="position:absolute;left:145.60px;top:113.40px;font-size:10px;line-height:12px;color:#555;font-weight:normal;-webkit-text-stroke:0.1px #555;white-space:pre;transform:scaleX(1.3411);transform-origin:0 0"><i style="font-family:Liberation Serif">f</i><i style="font-family:Liberation Serif;font-size:7px">x</i></div><div style="position:absolute;left:145.60px;top:402.90px;font-size:10px;line-height:12px;color:#555;font-weight:normal;-webkit-text-stroke:0.1px #555;white-space:pre;transform:scaleX(1.3411);transform-origin:0 0"><i style="font-family:Liberation Serif">f</i><i style="font-family:Liberation Serif;font-size:7px">x</i></div><div style="position:absolute;left:995.50px;top:27.80px;font-size:8px;line-height:12px;color:#555;font-weight:normal;-webkit-text-stroke:0.2px #555;white-space:pre;transform:scaleX(1.1241);transform-origin:0 0">/1</div>
<svg width="1000" height="593" viewBox="0 0 1000 593" style="position:absolute;left:0;top:0">
<polygon points="583.3,51.6 555.6,51 560.2,58.3 540,73.2 549,85.8 569.6,71.8 574.8,78.2" fill="#ffffff" fill-opacity="0.5"/><polygon points="583.3,51.6 555.6,51 560.2,58.3 540,73.2 549,85.8 569.6,71.8 574.8,78.2" fill="#f0504f" style="mix-blend-mode:multiply"/><path d="M978.5 530.5 A29.3 29.3 0 0 1 968 583.8" fill="none" stroke="#000" stroke-opacity="0.12" stroke-width="3"/><circle cx="962.6" cy="555" r="28.3" fill="#ffffff" fill-opacity="0.6" stroke="#cfdcea" stroke-width="0.7"/><path d="M963.9 565.9 C961 562, 955 560, 951 558 C945 555, 942.5 548, 943.6 541 C945 533, 953 529, 963.1 529 C972 529, 979 534, 978 543 C977.5 549, 973 555, 973.8 563.5 C971 566, 966 568, 964.7 572 C966 573, 975 569.5, 979.6 571.2 C977 575, 971 578, 967 580.3" fill="none" stroke="#739dd2" stroke-width="2" stroke-linecap="round" stroke-linejoin="round"/>
</svg>
</div></body></html>
